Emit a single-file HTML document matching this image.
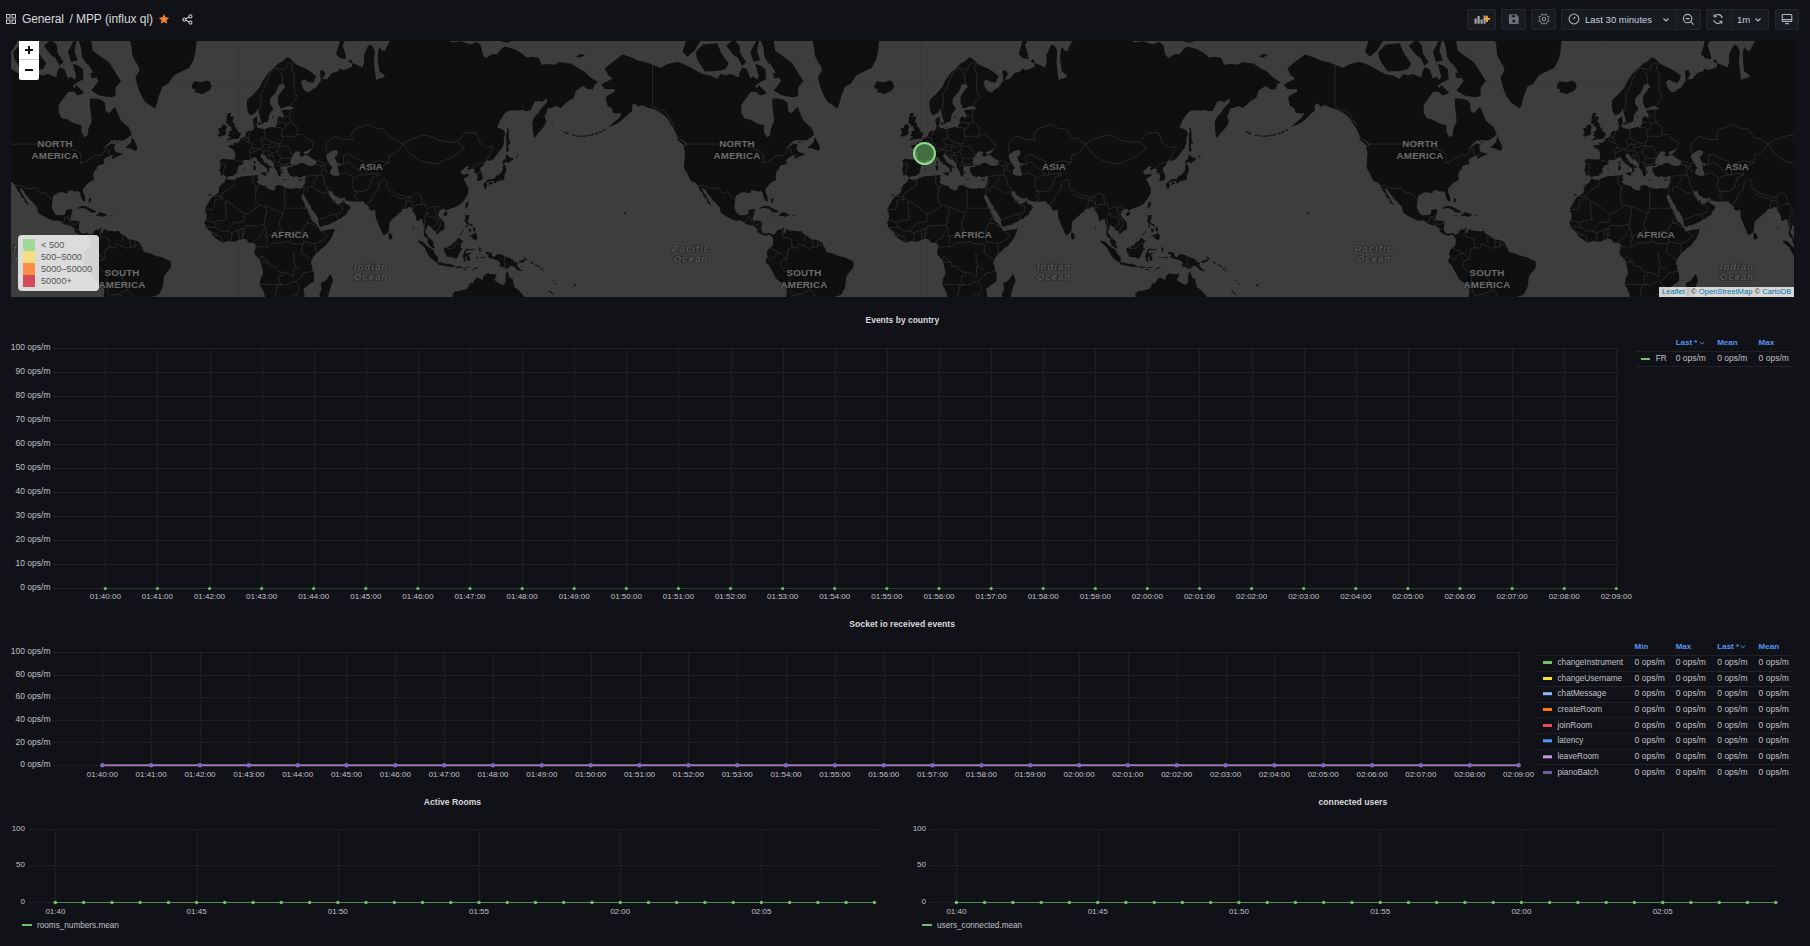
<!DOCTYPE html>
<html><head><meta charset="utf-8"><title>MPP (influx ql)</title>
<style>
html,body{margin:0;padding:0;background:#111217;width:1810px;height:946px;overflow:hidden;font-family:"Liberation Sans",sans-serif;}
.abs{position:absolute;}
.t{position:absolute;white-space:nowrap;}
.btn{position:absolute;top:9px;height:21px;box-sizing:border-box;background:#181b1f;border:1px solid #25282d;border-radius:2px;}
.btn svg{position:absolute;}
#map{position:absolute;left:11px;top:41px;width:1783px;height:256px;background:#3d3d3d;overflow:hidden;}
.mapsvg{position:absolute;left:0;top:0;}
.lbl{position:absolute;color:#6a6a6a;font-weight:bold;font-size:9.8px;text-align:center;line-height:11.5px;letter-spacing:0.15px;white-space:nowrap;transform:translateX(-50%);text-shadow:0 0 1px #151515,0 0 2px #151515;}
.ocean{position:absolute;color:#575757;font-style:italic;font-weight:bold;font-size:9.6px;text-align:center;line-height:10.6px;letter-spacing:1.05px;white-space:nowrap;transform:translateX(-50%);text-shadow:0 0 1px #1f1f1f,0 0 1px #1f1f1f,0 0 2px #262626;}
</style></head><body>

<!-- header -->
<svg class="abs" style="left:5px;top:13px" width="12" height="12" viewBox="0 0 12 12">
 <rect x="1.5" y="1.5" width="3.5" height="3.5" fill="none" stroke="#c9c9cf" stroke-width="1"/>
 <rect x="7" y="1.5" width="3.5" height="3.5" fill="none" stroke="#c9c9cf" stroke-width="1"/>
 <rect x="1.5" y="7" width="3.5" height="3.5" fill="none" stroke="#c9c9cf" stroke-width="1"/>
 <rect x="7" y="7" width="3.5" height="3.5" fill="none" stroke="#c9c9cf" stroke-width="1"/>
</svg>
<div class="t" style="left:22px;top:12px;font-size:12px;line-height:15px;color:#d8d9da;letter-spacing:-0.12px">General</div><div class="t" style="left:69.4px;top:12px;font-size:12px;line-height:15px;color:#d8d9da;letter-spacing:-0.05px">/ MPP (influx ql)</div>
<svg class="abs" style="left:158px;top:13px" width="12" height="12" viewBox="0 0 24 24"><path d="M12 1.8l3.1 6.6 7.2.9-5.3 5 1.4 7.1L12 17.9l-6.4 3.5 1.4-7.1-5.3-5 7.2-.9z" fill="#f5822a"/></svg>
<svg class="abs" style="left:181.5px;top:13.5px" width="11" height="11" viewBox="0 0 12 12" fill="none" stroke="#d0d0d6" stroke-width="1.15">
 <circle cx="9.2" cy="2.6" r="1.7"/><circle cx="2.7" cy="6" r="1.7"/><circle cx="9.2" cy="9.4" r="1.7"/>
 <path d="M4.2 5.2L7.7 3.4M4.2 6.8L7.7 8.6"/>
</svg>

<!-- toolbar -->
<div class="btn" style="left:1467px;width:29px;">
 <svg style="left:5px;top:3px" width="19" height="13" viewBox="0 0 19 13">
  <rect x="1.5" y="5.5" width="2.2" height="5.2" fill="#a3a5ad"/><rect x="4.5" y="3" width="2.2" height="7.7" fill="#a3a5ad"/>
  <rect x="7.5" y="6.5" width="2.2" height="4.2" fill="#a3a5ad"/><rect x="10.5" y="2.5" width="2.2" height="8.2" fill="#a3a5ad"/>
  <path d="M14 2.8v6.2M10.9 5.9h6.2" stroke="#f5a623" stroke-width="1.9"/>
 </svg>
</div>
<div class="btn" style="left:1501px;width:25px;">
 <svg style="left:6px;top:3px" width="12" height="12" viewBox="0 0 12 12">
  <path d="M1.8 1.2h6.3l2.7 2.7v6.1q0 .9-.9.9H1.8q-.9 0-.9-.9V2.1q0-.9.9-.9z" fill="#6f7178"/>
  <rect x="3.6" y="2.2" width="3.6" height="2" fill="#1b1d21"/><circle cx="5.9" cy="8" r="1.5" fill="#1b1d21"/>
 </svg>
</div>
<div class="btn" style="left:1531px;width:25px;">
 <svg style="left:6px;top:3px" width="12" height="12" viewBox="0 0 24 24" fill="none" stroke="#a9abb3" stroke-width="1.8">
  <circle cx="12" cy="12" r="3.4"/>
  <path d="M21.89 16.09 L21.72 16.48 L21.53 16.86 L21.25 17.18 L20.39 17.14 L19.48 17.00 L18.60 16.80 L18.27 16.94 L18.07 17.18 L17.86 17.42 L17.64 17.64 L17.42 17.86 L17.18 18.07 L16.94 18.27 L16.80 18.60 L17.00 19.48 L17.14 20.39 L17.18 21.25 L16.86 21.53 L16.48 21.72 L16.09 21.89 L15.70 22.04 L15.31 22.18 L14.88 22.20 L14.30 21.57 L13.76 20.83 L13.28 20.06 L12.94 19.92 L12.63 19.96 L12.31 19.97 L12.00 19.98 L11.69 19.97 L11.37 19.96 L11.06 19.92 L10.72 20.06 L10.24 20.83 L9.70 21.57 L9.12 22.20 L8.69 22.18 L8.30 22.04 L7.91 21.89 L7.52 21.72 L7.14 21.53 L6.82 21.25 L6.86 20.39 L7.00 19.48 L7.20 18.60 L7.06 18.27 L6.82 18.07 L6.58 17.86 L6.36 17.64 L6.14 17.42 L5.93 17.18 L5.73 16.94 L5.40 16.80 L4.52 17.00 L3.61 17.14 L2.75 17.18 L2.47 16.86 L2.28 16.48 L2.11 16.09 L1.96 15.70 L1.82 15.31 L1.80 14.88 L2.43 14.30 L3.17 13.76 L3.94 13.28 L4.08 12.94 L4.04 12.63 L4.03 12.31 L4.02 12.00 L4.03 11.69 L4.04 11.37 L4.08 11.06 L3.94 10.72 L3.17 10.24 L2.43 9.70 L1.80 9.12 L1.82 8.69 L1.96 8.30 L2.11 7.91 L2.28 7.52 L2.47 7.14 L2.75 6.82 L3.61 6.86 L4.52 7.00 L5.40 7.20 L5.73 7.06 L5.93 6.82 L6.14 6.58 L6.36 6.36 L6.58 6.14 L6.82 5.93 L7.06 5.73 L7.20 5.40 L7.00 4.52 L6.86 3.61 L6.82 2.75 L7.14 2.47 L7.52 2.28 L7.91 2.11 L8.30 1.96 L8.69 1.82 L9.12 1.80 L9.70 2.43 L10.24 3.17 L10.72 3.94 L11.06 4.08 L11.37 4.04 L11.69 4.03 L12.00 4.02 L12.31 4.03 L12.63 4.04 L12.94 4.08 L13.28 3.94 L13.76 3.17 L14.30 2.43 L14.88 1.80 L15.31 1.82 L15.70 1.96 L16.09 2.11 L16.48 2.28 L16.86 2.47 L17.18 2.75 L17.14 3.61 L17.00 4.52 L16.80 5.40 L16.94 5.73 L17.18 5.93 L17.42 6.14 L17.64 6.36 L17.86 6.58 L18.07 6.82 L18.27 7.06 L18.60 7.20 L19.48 7.00 L20.39 6.86 L21.25 6.82 L21.53 7.14 L21.72 7.52 L21.89 7.91 L22.04 8.30 L22.18 8.69 L22.20 9.12 L21.57 9.70 L20.83 10.24 L20.06 10.72 L19.92 11.06 L19.96 11.37 L19.97 11.69 L19.98 12.00 L19.97 12.31 L19.96 12.63 L19.92 12.94 L20.06 13.28 L20.83 13.76 L21.57 14.30 L22.20 14.88 L22.18 15.31 L22.04 15.70Z" stroke-linejoin="round"/>
 </svg>
</div>
<div class="btn" style="left:1561px;width:140px;">
 <svg style="left:6px;top:3px" width="12" height="12" viewBox="0 0 12 12" fill="none" stroke="#b3b5bc" stroke-width="1.05">
  <circle cx="6" cy="6" r="4.9"/><path d="M5.6 6.1L7.1 3.9"/>
 </svg>
 <div class="t" style="left:23px;top:2.5px;font-size:9.5px;line-height:13px;color:#c2cde0;">Last 30 minutes</div>
 <svg style="left:100.2px;top:6.5px" width="8" height="6" viewBox="0 0 8 6"><path d="M1.5 1.5L4 4 6.5 1.5" fill="none" stroke="#b9bac2" stroke-width="1.1"/></svg>
 <div class="abs" style="left:114px;top:0;width:1px;height:19px;background:#25282d;"></div>
 <svg style="left:120px;top:3px" width="13" height="13" viewBox="0 0 13 13" fill="none" stroke="#b3b5bc" stroke-width="1.1">
  <circle cx="5.6" cy="5.6" r="4.2"/><path d="M3.6 5.6h4M8.6 8.6L11.6 11.6"/>
 </svg>
</div>
<div class="btn" style="left:1706px;width:63px;">
 <svg style="left:5px;top:3px" width="12" height="12" viewBox="0 0 12 12" fill="none" stroke="#b3b5bc" stroke-width="1.1">
  <path d="M10.2 5A4.3 4.3 0 0 0 2.4 3.5M1.8 7a4.3 4.3 0 0 0 7.8 1.5"/><path d="M2.2 1.2v2.5h2.5M9.8 10.8V8.3H7.3"/>
 </svg>
 <div class="abs" style="left:24px;top:0;width:1px;height:19px;background:#25282d;"></div>
 <div class="t" style="left:30px;top:2.5px;font-size:9.5px;line-height:13px;color:#c2cde0;">1m</div>
 <svg style="left:46.5px;top:6.5px" width="8" height="6" viewBox="0 0 8 6"><path d="M1.5 1.5L4 4 6.5 1.5" fill="none" stroke="#b9bac2" stroke-width="1.1"/></svg>
</div>
<div class="btn" style="left:1775px;width:24px;">
 <svg style="left:4.8px;top:3px" width="12" height="12" viewBox="0 0 12 12" fill="none" stroke="#b3b5bc" stroke-width="1.1">
  <rect x="1.2" y="1.5" width="9.6" height="7" rx="0.8"/><path d="M1.2 6.6h9.6M4.2 10.6h3.6"/>
 </svg>
</div>

<!-- map -->
<div id="map">
<svg class="mapsvg" width="1783" height="256" viewBox="0 0 1783 256"><defs><path id="grat" d="M341.90 -300V300M0 -169.50H682.5" stroke="#393939" stroke-width="1" fill="none"/><g id="wld"><path d="M22.6 -166.4L31.3 -171.0L34.1 -172.5L29.4 -175.9L26.2 -182.6L32.2 -187.4L37.9 -191.9L44.0 -196.5L53.1 -193.6L60.1 -190.2L68.2 -188.5L73.9 -186.3L82.5 -183.1L87.2 -186.3L94.8 -188.5L99.7 -189.1L107.9 -185.8L113.8 -182.6L123.6 -176.9L131.9 -175.4L138.6 -172.0L142.0 -176.9L146.9 -175.4L151.9 -176.9L160.2 -173.4L161.0 -178.4L163.4 -183.6L168.3 -182.0L171.8 -172.5L175.0 -174.4L178.4 -171.0L180.1 -174.4L176.7 -186.9L181.6 -185.8L186.7 -182.0L187.5 -172.0L181.6 -168.7L176.7 -165.4L179.2 -160.1L171.8 -158.8L168.7 -154.6L162.7 -146.1L162.5 -138.6L165.9 -132.5L171.6 -131.5L178.2 -127.4L185.2 -125.7L185.4 -118.6L188.6 -113.7L191.5 -115.8L192.2 -122.1L195.5 -129.7L194.7 -137.9L193.8 -145.0L193.8 -152.5L200.0 -152.5L205.7 -150.9L208.9 -148.1L209.5 -140.4L212.7 -137.5L216.1 -141.2L219.0 -144.2L222.8 -135.0L224.7 -130.4L229.0 -126.4L232.6 -123.7L235.7 -116.7L232.8 -114.0L227.5 -110.4L219.9 -110.7L215.2 -110.4L210.4 -105.7L206.6 -101.2L209.5 -103.4L215.2 -107.4L219.2 -106.3L218.0 -103.4L218.6 -100.9L219.9 -99.0L225.6 -97.4L227.5 -98.7L225.2 -96.3L219.9 -93.9L216.5 -92.0L215.7 -94.7L219.3 -96.8L214.2 -95.5L211.4 -93.9L208.2 -92.3L207.4 -89.7L208.7 -87.4L205.7 -86.4L201.5 -84.9L201.0 -83.9L200.4 -81.4L198.3 -80.2L197.0 -76.1L197.9 -71.6L196.2 -70.2L192.4 -68.2L189.6 -65.2L186.9 -61.9L187.1 -58.6L189.2 -53.2L189.0 -50.0L187.9 -49.2L186.2 -51.3L184.5 -54.9L184.3 -57.9L182.0 -59.9L179.2 -59.2L176.3 -60.5L172.7 -60.5L171.4 -58.1L169.7 -57.7L166.8 -58.8L163.0 -58.8L160.2 -57.1L157.0 -54.9L156.6 -51.1L156.0 -47.5L155.8 -43.6L156.8 -40.7L158.7 -37.3L161.5 -35.5L165.9 -35.9L168.3 -36.1L169.9 -38.5L169.9 -40.7L173.5 -41.8L176.3 -41.8L175.6 -37.7L174.8 -35.1L173.8 -30.7L177.3 -30.3L182.0 -30.3L183.5 -28.8L182.9 -24.9L182.8 -21.0L183.9 -19.1L186.7 -17.1L190.5 -18.3L193.8 -16.7L194.7 -15.6L193.6 -13.7L192.6 -15.4L190.3 -16.7L188.8 -15.2L186.6 -15.2L182.6 -16.4L178.8 -18.9L178.6 -21.4L175.4 -24.7L171.6 -25.8L167.8 -26.8L164.0 -29.8L161.1 -30.7L158.3 -30.1L154.5 -31.3L151.7 -32.5L147.9 -34.5L144.1 -36.7L141.6 -39.3L141.4 -41.8L140.9 -44.0L138.8 -46.1L136.5 -49.0L134.0 -51.1L131.8 -54.3L129.1 -57.1L127.2 -60.8L123.8 -63.2L124.2 -60.3L126.6 -56.6L128.5 -53.2L130.8 -49.0L132.1 -47.3L132.9 -44.8L131.9 -46.3L128.7 -48.6L128.3 -52.1L124.6 -54.5L124.7 -57.1L121.7 -60.3L120.0 -63.4L119.1 -65.7L116.8 -68.4L112.6 -69.8L110.1 -73.9L109.0 -77.5L106.7 -80.4L105.4 -83.9L105.8 -87.9L106.0 -93.1L106.4 -99.0L104.8 -104.6L107.7 -104.9L108.4 -106.9L106.2 -109.2L103.3 -111.3L99.5 -112.8L97.6 -117.4L94.8 -123.1L91.9 -127.0L89.1 -132.2L84.4 -136.8L81.5 -138.2L76.2 -141.5L70.1 -143.1L63.5 -146.1L59.7 -144.2L56.5 -147.7L53.5 -145.7L53.5 -140.1L50.2 -137.5L47.4 -134.6L42.7 -130.4L38.9 -127.4L34.1 -125.4L29.4 -123.7L35.1 -128.4L40.8 -133.2L43.0 -137.9L39.8 -137.5L34.5 -137.9L33.2 -142.7L29.0 -145.0L27.9 -149.7L26.9 -153.3L29.4 -155.8L36.0 -159.2L36.0 -161.9L31.3 -161.9L26.2 -161.9L22.6 -166.4ZM258.8 -142.3L254.0 -145.7L249.3 -148.9L245.5 -155.0L243.0 -160.5L240.8 -167.3L239.4 -173.9L243.6 -181.0L241.7 -185.8L238.9 -190.2L236.0 -195.9L235.5 -203.3L233.2 -213.1L230.3 -224.0L223.7 -229.4L212.3 -231.0L204.8 -240.2L208.5 -254.2L218.0 -273.7L237.0 -291.7L265.4 -311.6L293.9 -303.5L307.1 -282.4L306.2 -254.2L304.3 -235.9L303.3 -220.2L300.5 -209.8L299.5 -200.2L297.6 -191.3L292.9 -183.1L284.4 -178.9L277.7 -175.4L272.1 -167.3L266.4 -164.5L264.5 -159.2L262.6 -155.0L260.7 -146.9ZM295.8 -165.9L298.6 -170.1L303.3 -168.7L307.1 -169.1L310.9 -170.6L313.8 -169.1L315.7 -164.5L313.2 -160.5L309.0 -158.4L305.8 -156.7L301.4 -158.4L298.2 -158.4L299.5 -161.4L295.8 -162.7ZM182.0 -212.5L194.9 -211.8L196.6 -200.2L213.1 -188.5L224.8 -170.1L219.7 -163.6L219.3 -155.0L215.2 -153.7L208.5 -154.6L202.9 -155.8L195.3 -160.5L202.5 -170.1L192.4 -186.3L189.6 -188.0L185.8 -194.2L184.8 -203.3ZM176.7 -160.1L180.1 -165.9L188.3 -157.9L181.6 -155.4ZM117.2 -198.9L124.6 -206.5L138.6 -207.8L142.8 -197.7L150.2 -187.4L146.9 -182.0L138.6 -180.0L126.3 -179.4L120.4 -188.5L117.9 -193.6ZM103.9 -198.9L107.9 -211.8L122.8 -211.8L116.2 -200.8L108.8 -194.2ZM147.7 -205.2L155.3 -211.8L161.0 -205.2L161.7 -197.7L167.6 -189.1L163.4 -185.2L159.2 -193.6L155.3 -195.4ZM171.8 -198.9L178.4 -211.8L180.9 -211.8L178.4 -200.2L181.6 -190.7L175.0 -189.1ZM194.1 -177.9L199.1 -178.4L200.0 -173.4L195.8 -172.5ZM194.5 -16.2L196.2 -16.9L197.5 -18.3L198.5 -20.6L200.6 -21.6L202.9 -21.6L204.9 -23.3L206.3 -22.9L204.9 -21.6L205.7 -19.6L206.5 -17.7L206.8 -20.6L208.5 -22.1L211.4 -20.2L215.2 -20.2L219.0 -19.4L222.8 -20.2L223.9 -18.1L226.0 -16.4L228.4 -15.8L230.9 -13.1L233.2 -11.4L237.0 -11.2L239.8 -10.6L242.7 -9.1L244.0 -8.0L244.9 -4.4L246.5 -3.2L246.8 -0.4L249.3 1.5L253.1 1.9L256.5 3.6L258.8 4.6L262.6 5.5L266.4 6.3L270.2 8.5L274.3 10.1L275.1 14.3L274.5 17.1L272.1 19.8L270.2 22.3L268.1 24.9L267.3 28.4L267.1 33.7L266.0 37.3L264.5 40.3L262.8 43.4L259.7 44.8L256.5 45.6L253.1 47.1L250.2 49.6L249.1 53.2L248.5 56.6L245.9 60.3L243.0 64.1L240.8 68.2L237.9 70.5L234.1 70.5L231.3 69.3L232.8 73.0L232.2 78.0L228.4 79.7L223.3 80.2L223.3 84.1L218.0 85.4L220.3 88.7L217.5 93.9L213.3 99.3L216.5 103.4L212.3 110.7L210.4 114.6L211.8 118.9L215.2 125.4L209.5 126.7L204.8 123.1L200.0 117.4L198.1 108.3L198.1 99.8L200.4 93.1L201.3 86.6L201.9 79.2L203.8 72.1L205.5 65.2L205.9 59.7L206.8 54.3L207.6 46.9L208.2 40.7L208.0 35.3L205.7 33.3L201.9 31.1L197.5 27.8L195.7 23.9L193.0 19.1L190.5 14.5L187.3 11.6L187.3 8.2L189.0 6.4L189.6 4.7L188.1 4.2L188.1 1.9L189.4 -1.5L191.5 -3.0L193.8 -4.9L194.5 -7.4L194.7 -11.0L194.3 -13.1L193.6 -13.9ZM180.3 -42.6L183.9 -44.6L186.7 -45.2L190.5 -44.4L194.3 -42.4L197.7 -40.9L200.6 -39.3L198.1 -38.5L194.3 -38.5L193.0 -39.9L190.5 -42.0L186.7 -43.0L182.9 -42.6ZM200.2 -35.5L202.9 -38.5L205.7 -38.5L209.5 -37.1L211.6 -35.9L208.5 -35.1L205.9 -33.9L203.8 -35.3L200.4 -34.7ZM192.6 -35.5L196.8 -35.3L196.2 -34.5L193.4 -34.9ZM213.9 -35.7L216.9 -35.3L216.5 -34.7L213.9 -34.7ZM193.0 -52.8L195.3 -52.3L194.3 -49.0L192.4 -47.9ZM330.1 -72.8L332.7 -71.4L337.1 -71.1L341.2 -73.0L346.0 -74.7L351.7 -75.1L357.6 -75.4L360.6 -76.1L362.3 -75.4L361.3 -72.5L362.3 -71.4L360.6 -69.3L361.9 -67.7L364.9 -65.9L370.3 -64.8L371.0 -62.8L376.3 -60.5L378.4 -60.8L379.4 -63.0L379.2 -64.8L382.0 -66.1L385.2 -65.4L389.0 -63.2L393.4 -62.3L397.9 -62.3L400.0 -63.2L402.5 -62.5L403.1 -59.4L404.2 -56.2L405.5 -53.6L406.8 -50.2L408.7 -46.7L409.1 -43.8L411.4 -41.8L412.0 -37.9L414.2 -34.7L415.6 -30.7L417.1 -29.2L419.4 -27.6L421.4 -24.9L423.1 -22.3L425.6 -19.8L428.5 -20.4L432.2 -21.4L435.7 -21.6L438.5 -22.5L438.1 -19.8L437.2 -17.1L435.1 -12.5L432.2 -8.7L429.4 -5.1L425.8 -2.7L422.4 0.4L419.9 3.0L417.5 5.3L415.6 8.9L414.8 12.3L415.9 15.2L416.3 19.1L417.8 21.9L418.2 27.2L417.5 30.7L412.3 33.9L409.5 36.3L407.2 38.3L408.4 42.8L408.6 46.5L403.8 49.8L403.4 52.1L403.2 55.3L401.9 57.3L399.6 60.8L396.2 64.8L392.8 67.5L389.6 68.6L383.9 68.6L379.2 70.5L376.1 69.3L375.8 64.1L373.9 58.6L372.3 56.4L370.1 52.8L368.7 44.8L368.0 41.8L365.5 36.7L363.6 33.7L364.4 27.8L367.0 22.9L366.3 18.1L364.6 11.8L364.0 9.1L361.7 6.6L358.7 3.4L358.3 0.9L359.3 -1.9L359.8 -5.7L357.9 -8.2L355.5 -8.3L352.6 -8.2L349.8 -12.0L346.0 -12.0L343.1 -11.2L339.4 -9.5L335.6 -9.5L331.8 -9.9L327.0 -8.3L323.2 -10.4L319.4 -13.1L316.6 -15.2L315.8 -18.1L312.8 -20.8L309.6 -23.7L309.2 -26.4L308.1 -28.2L309.4 -29.9L310.3 -32.7L310.7 -35.7L310.0 -37.7L308.8 -40.5L309.2 -42.6L310.9 -46.3L313.0 -49.2L314.1 -51.5L316.4 -54.7L319.4 -56.0L321.9 -58.1L322.9 -60.8L322.7 -63.0L324.2 -65.4L326.7 -67.7L328.4 -68.8L329.5 -71.4ZM434.7 22.9L436.4 27.8L437.0 29.8L435.7 32.7L434.7 35.7L433.2 40.7L431.9 45.9L430.5 48.8L427.5 50.0L425.0 48.6L423.9 45.4L423.3 42.4L425.4 38.7L424.9 34.7L424.7 31.9L427.5 30.7L430.4 28.8L432.1 26.0ZM330.6 -73.2L329.1 -75.1L327.0 -76.1L324.4 -75.6L324.6 -78.7L323.2 -79.9L324.2 -83.4L324.6 -86.6L323.6 -90.5L326.1 -92.3L330.8 -91.8L334.0 -91.5L338.2 -91.5L339.0 -94.9L339.0 -98.4L337.1 -101.5L332.7 -103.7L332.3 -105.4L335.6 -106.3L338.2 -105.7L337.6 -108.9L339.0 -108.0L341.6 -108.3L344.1 -110.4L344.3 -112.5L347.3 -113.7L349.2 -115.5L350.2 -118.6L352.6 -120.2L354.9 -119.9L357.6 -121.8L357.6 -126.7L356.6 -130.8L357.6 -132.5L361.3 -134.6L361.0 -130.4L361.9 -130.1L360.2 -125.7L361.7 -123.1L364.0 -122.8L367.8 -121.8L371.6 -123.1L376.5 -124.1L378.8 -123.4L381.3 -127.7L381.1 -131.5L382.4 -134.3L384.1 -135.0L387.1 -132.5L387.5 -137.1L385.8 -138.9L385.8 -140.4L388.1 -141.2L391.5 -141.2L394.3 -141.2L398.5 -142.7L396.2 -143.8L393.4 -145.0L390.5 -144.6L388.6 -143.8L384.7 -142.3L383.3 -145.0L381.8 -148.9L382.0 -155.0L384.9 -158.8L387.7 -162.7L389.4 -164.1L387.1 -167.3L383.0 -166.4L381.4 -161.9L379.2 -157.9L376.3 -155.0L374.2 -152.5L373.9 -146.9L376.5 -143.8L377.1 -141.2L375.0 -139.3L372.9 -135.7L372.5 -132.2L371.4 -129.1L368.6 -128.7L365.7 -126.7L365.1 -129.7L363.8 -134.3L362.3 -139.3L361.5 -142.7L360.2 -139.3L357.4 -136.8L354.5 -135.7L351.9 -138.6L351.3 -141.5L350.7 -145.3L350.9 -150.5L353.0 -152.9L357.4 -156.7L363.1 -163.2L366.5 -170.1L370.8 -176.4L373.5 -179.4L377.8 -183.1L382.0 -187.4L386.4 -189.6L390.2 -193.6L393.0 -193.0L396.2 -190.2L399.6 -186.9L403.8 -184.7L408.2 -183.1L414.2 -179.4L419.9 -174.9L418.0 -170.1L416.5 -168.2L412.3 -169.1L408.2 -171.5L404.8 -169.6L406.5 -163.6L408.6 -160.5L410.4 -159.2L413.3 -158.8L416.1 -161.4L419.9 -163.6L423.7 -169.1L424.7 -169.6L424.3 -175.4L423.7 -180.5L427.5 -180.5L429.4 -176.9L426.0 -171.5L431.3 -172.0L436.0 -177.9L441.7 -179.4L443.6 -182.6L447.4 -181.0L452.2 -182.6L455.9 -184.2L456.1 -188.0L461.6 -185.8L466.4 -183.6L468.1 -188.5L467.7 -195.4L471.1 -203.3L473.0 -206.5L475.9 -205.2L478.7 -200.2L479.3 -194.2L478.9 -188.5L478.7 -180.5L481.5 -176.9L482.9 -182.0L481.0 -185.8L481.5 -192.5L480.0 -197.1L483.4 -203.9L486.3 -200.2L489.1 -200.2L490.1 -203.3L493.9 -209.8L496.7 -210.4L505.2 -213.1L506.2 -220.2L511.9 -224.0L521.4 -227.8L530.8 -231.8L538.4 -242.0L544.1 -235.9L553.6 -231.8L556.4 -224.7L554.5 -213.1L550.7 -211.1L556.4 -208.4L565.0 -209.8L574.4 -206.5L581.1 -209.1L584.9 -205.2L586.4 -197.1L589.6 -193.0L595.3 -196.5L601.0 -197.1L605.7 -202.6L608.6 -204.5L618.0 -202.0L625.6 -197.7L630.4 -193.6L637.0 -194.2L642.7 -193.0L645.5 -186.3L652.2 -186.9L658.8 -186.3L663.5 -189.1L669.2 -188.0L674.9 -187.4L682.5 -182.6L688.2 -179.4L693.9 -173.9L698.6 -171.0L702.0 -168.7L698.6 -166.4L696.7 -161.4L691.0 -161.9L687.2 -165.0L684.4 -163.6L681.6 -161.4L679.7 -160.1L677.8 -153.3L672.1 -150.1L669.2 -147.3L664.5 -143.1L659.8 -145.0L655.0 -143.1L651.2 -142.3L650.3 -137.5L648.4 -135.0L650.3 -129.4L648.4 -125.4L644.6 -120.5L641.7 -117.4L638.3 -112.8L637.0 -117.4L636.4 -123.7L636.1 -128.7L637.9 -133.2L639.8 -135.7L642.7 -138.6L645.5 -143.1L647.4 -145.0L651.2 -148.9L650.8 -152.5L645.5 -148.9L643.6 -150.1L638.9 -149.7L634.2 -140.4L629.4 -139.7L627.5 -141.2L622.8 -140.4L617.1 -140.8L612.4 -140.4L608.6 -137.5L603.8 -130.4L601.0 -123.7L604.8 -122.1L607.6 -120.5L609.3 -117.4L607.8 -112.8L607.6 -106.9L605.7 -102.6L603.8 -100.6L600.6 -96.3L597.6 -92.3L593.4 -89.9L591.1 -90.7L588.8 -88.9L587.1 -85.4L583.9 -82.9L584.9 -79.2L586.4 -76.3L586.6 -72.8L586.0 -71.1L583.0 -70.2L580.9 -69.5L580.9 -72.1L581.5 -75.1L580.5 -77.3L578.6 -77.5L577.9 -79.4L578.6 -81.6L576.7 -82.6L574.2 -81.9L571.8 -80.2L571.6 -82.4L573.1 -84.1L571.0 -85.1L568.8 -83.4L566.5 -80.9L564.6 -80.2L565.0 -78.0L566.9 -76.1L569.7 -77.0L573.5 -76.6L572.5 -75.1L569.3 -73.5L567.2 -70.9L569.3 -69.3L570.6 -65.2L572.4 -63.4L572.4 -61.6L571.6 -60.1L572.5 -59.2L571.6 -56.4L569.7 -53.6L568.0 -51.1L565.9 -47.9L563.1 -45.9L560.2 -44.4L557.8 -43.4L555.5 -42.8L552.6 -41.8L550.7 -41.1L550.2 -39.3L549.2 -41.8L546.9 -42.2L543.5 -40.3L541.8 -36.7L543.2 -34.3L545.1 -31.7L547.5 -29.6L548.5 -25.8L548.3 -22.1L546.0 -20.6L543.7 -19.6L542.8 -18.1L540.5 -16.4L539.9 -18.3L540.5 -19.1L539.0 -20.0L536.5 -21.0L535.8 -23.3L534.1 -24.3L532.5 -25.8L531.0 -25.6L530.8 -23.3L529.3 -19.8L529.3 -17.5L531.4 -16.0L531.8 -13.9L533.7 -12.9L535.0 -11.8L537.3 -9.3L537.3 -6.4L538.0 -4.7L539.0 -2.7L537.5 -2.5L535.6 -3.8L533.3 -5.3L532.0 -8.0L531.2 -10.4L531.4 -12.3L530.3 -13.1L528.0 -15.2L527.6 -18.1L528.0 -20.4L528.4 -22.9L527.4 -25.8L526.7 -28.8L526.3 -31.7L524.2 -31.7L522.1 -30.1L520.0 -30.7L519.8 -34.7L518.5 -37.5L516.6 -39.7L515.7 -41.8L515.3 -43.6L513.0 -44.0L510.9 -42.4L509.0 -42.2L506.2 -41.8L505.2 -39.1L502.6 -37.7L500.5 -35.3L497.3 -32.7L495.4 -31.3L493.5 -28.8L493.1 -25.8L493.3 -22.9L492.5 -19.6L491.0 -17.7L489.5 -16.9L488.2 -15.4L486.5 -16.9L485.3 -20.0L484.4 -22.5L483.1 -24.5L481.7 -28.4L480.6 -30.7L479.6 -34.3L479.3 -37.1L479.3 -39.7L478.9 -41.5L477.7 -40.7L476.2 -40.3L474.0 -41.1L472.1 -43.2L474.5 -44.4L472.1 -44.4L470.5 -46.3L469.0 -46.9L467.9 -48.6L467.3 -49.8L463.5 -49.4L458.8 -49.2L457.8 -49.2L454.1 -49.8L449.9 -50.7L449.1 -53.0L448.2 -53.6L445.5 -52.6L442.7 -53.0L439.8 -54.9L438.5 -55.3L437.0 -57.5L436.0 -59.9L433.4 -59.7L432.1 -59.4L433.0 -56.4L433.8 -54.5L435.3 -53.0L436.4 -51.1L437.6 -48.6L438.3 -51.3L439.1 -50.7L439.1 -47.9L440.8 -47.3L443.6 -47.1L446.5 -49.6L447.6 -51.3L448.2 -51.9L448.2 -48.8L450.1 -46.7L452.3 -46.1L453.7 -44.4L454.6 -43.6L452.7 -40.7L450.8 -39.1L450.6 -36.7L448.6 -35.3L445.9 -33.9L445.1 -32.5L441.0 -31.3L440.2 -29.9L435.3 -28.0L433.6 -26.8L431.3 -26.0L427.7 -25.4L426.6 -24.5L423.7 -24.3L423.1 -25.4L422.4 -28.8L422.2 -31.5L421.4 -33.7L419.4 -36.7L418.6 -38.7L416.5 -40.5L415.4 -41.8L414.2 -46.1L412.3 -47.5L411.6 -49.2L409.9 -52.3L408.7 -54.9L407.4 -56.4L407.6 -58.6L406.8 -57.7L406.3 -55.3L404.9 -55.1L403.2 -58.8L403.1 -60.3L402.5 -62.5L406.1 -62.5L406.8 -63.6L407.6 -65.9L408.6 -68.4L409.3 -71.4L409.3 -73.0L409.9 -74.7L408.6 -74.7L407.0 -75.1L405.7 -73.9L402.9 -73.5L400.0 -75.1L397.6 -73.7L395.3 -75.1L393.4 -75.6L392.8 -77.7L391.3 -78.7L392.1 -80.4L390.9 -81.6L391.5 -83.1L393.0 -83.9L395.9 -83.9L397.2 -84.9L396.4 -85.9L394.3 -85.6L391.3 -84.4L389.6 -85.1L387.7 -85.1L386.2 -84.6L384.7 -84.4L384.1 -82.9L385.4 -80.9L384.1 -79.2L386.8 -78.5L385.2 -77.7L384.5 -76.3L384.9 -74.4L383.7 -74.4L382.4 -75.1L381.6 -77.0L381.3 -78.7L380.5 -80.4L379.2 -82.1L378.0 -83.6L378.0 -86.6L376.3 -89.2L373.9 -91.2L371.6 -91.8L370.1 -93.6L368.4 -96.3L367.2 -96.0L367.0 -97.9L364.6 -96.5L364.6 -94.7L365.1 -93.3L367.0 -91.8L367.8 -89.2L369.9 -87.6L371.8 -87.4L371.4 -86.6L374.4 -85.1L376.3 -83.4L376.1 -82.4L373.9 -83.9L372.7 -82.9L373.7 -80.4L372.0 -78.7L371.0 -78.0L371.2 -80.2L370.8 -83.1L369.5 -83.4L368.4 -84.6L367.0 -85.9L365.1 -86.6L363.1 -88.9L361.2 -90.2L360.6 -92.8L358.3 -94.1L356.4 -92.8L354.5 -91.8L352.6 -90.7L350.0 -91.5L347.1 -90.7L347.3 -87.9L345.4 -86.1L342.8 -85.4L341.6 -82.6L340.7 -81.1L341.6 -79.7L339.9 -77.0L338.6 -76.8L337.3 -74.9L333.7 -74.9L332.0 -74.4ZM330.4 -110.1L333.1 -111.0L334.8 -111.6L337.5 -111.9L339.4 -112.2L341.8 -112.2L343.9 -113.4L343.0 -114.6L344.5 -116.1L344.5 -118.0L342.0 -118.9L341.4 -120.5L340.5 -122.8L339.0 -124.1L338.2 -127.4L337.3 -128.7L335.6 -129.1L336.5 -130.1L337.5 -132.5L337.8 -134.3L335.0 -134.6L333.7 -134.3L335.4 -137.9L331.8 -137.9L331.0 -135.3L330.4 -132.9L330.6 -130.1L329.7 -129.1L330.8 -126.7L332.0 -127.7L332.5 -126.0L331.6 -124.7L334.6 -125.0L334.8 -123.1L335.6 -121.8L335.6 -120.2L333.3 -119.9L332.5 -118.6L333.5 -117.0L331.4 -115.2L333.3 -114.6L335.4 -114.0L334.6 -113.4L332.7 -113.1L331.4 -111.3ZM329.9 -116.4L329.7 -119.9L329.9 -122.1L330.8 -123.7L329.5 -126.0L327.4 -126.4L325.1 -125.0L325.1 -123.1L322.3 -122.8L322.7 -120.2L323.6 -117.7L321.5 -115.5L323.2 -114.3L326.1 -115.2L328.9 -116.1ZM364.8 -78.2L366.8 -78.5L370.8 -78.7L369.9 -76.3L369.9 -74.9L367.8 -75.8L365.1 -77.0ZM356.8 -85.1L358.7 -85.9L359.8 -84.1L359.4 -80.9L358.3 -80.4L357.2 -80.7L357.4 -83.6ZM357.6 -88.9L359.1 -90.5L359.4 -88.1L358.7 -86.4L357.7 -87.4ZM385.8 -71.6L388.6 -71.8L391.1 -71.4L388.6 -70.9L386.0 -71.4ZM402.5 -70.9L403.8 -71.6L406.8 -72.5L405.5 -70.9L403.8 -70.0ZM439.8 -197.1L444.6 -192.5L450.3 -191.9L448.4 -200.2L446.5 -205.2L448.4 -209.8L452.2 -216.6L455.0 -224.0L460.7 -229.4L471.1 -234.3L468.3 -235.9L455.0 -231.8L445.5 -220.2L443.6 -209.8L442.1 -203.3ZM452.2 -189.6L455.9 -187.4L455.4 -191.3L453.1 -191.3ZM523.2 -244.7L540.3 -244.7L540.3 -276.1L523.2 -276.1ZM601.0 -213.1L606.7 -209.1L613.3 -208.4L618.0 -213.1L616.1 -224.0L606.7 -227.8L601.0 -224.0ZM679.7 -194.2L684.4 -197.1L689.1 -195.9L684.4 -193.6ZM362.1 -249.4L371.6 -232.6L383.0 -240.2L392.4 -264.6L369.7 -266.8ZM589.4 -69.3L590.6 -70.0L592.4 -71.6L595.3 -72.1L598.1 -72.3L599.1 -73.2L600.6 -76.3L601.5 -75.1L603.8 -77.3L605.7 -79.2L606.7 -81.6L606.5 -84.4L607.2 -85.9L609.1 -86.4L609.5 -84.1L610.5 -81.6L609.7 -78.7L608.6 -76.8L608.4 -74.4L608.0 -72.5L608.4 -71.1L606.5 -70.7L605.1 -71.4L604.4 -70.0L601.9 -70.2L600.6 -69.3L599.1 -67.5L597.4 -68.4L597.8 -70.0L595.7 -70.2L593.4 -69.5L591.5 -68.6L589.6 -68.4ZM587.3 -67.5L589.4 -68.4L591.1 -67.0L590.7 -64.1L590.0 -62.5L588.8 -61.9L588.1 -63.0L588.1 -65.0L587.1 -65.7ZM592.3 -66.3L593.2 -68.4L595.5 -69.3L596.6 -68.2L595.7 -66.8L594.0 -67.2L593.2 -65.7ZM606.7 -86.6L608.4 -87.4L609.1 -89.2L611.4 -88.4L612.9 -87.9L615.2 -90.2L617.3 -91.2L616.3 -93.6L614.2 -93.3L611.8 -95.2L610.3 -97.1L609.7 -94.4L609.3 -91.5L607.4 -91.2L606.7 -89.4ZM610.1 -98.4L612.0 -100.1L613.3 -99.8L612.2 -103.4L612.4 -107.4L614.6 -106.9L612.7 -112.8L612.9 -117.7L612.2 -123.1L611.0 -123.1L611.2 -118.9L609.9 -115.8L610.5 -109.8L610.3 -105.4L610.5 -101.8ZM568.9 -45.0L570.1 -42.8L571.6 -44.2L572.4 -47.9L571.8 -49.6L569.9 -48.3ZM547.1 -37.1L549.0 -38.7L550.9 -38.9L551.7 -37.9L550.4 -35.5L548.8 -35.1L547.3 -35.7ZM492.7 -18.5L493.9 -18.3L495.4 -16.2L496.5 -14.3L495.9 -12.3L494.1 -11.2L492.9 -12.3L492.5 -15.2ZM568.8 -35.5L570.5 -35.9L573.1 -35.7L572.9 -33.1L571.8 -30.5L572.2 -27.4L573.9 -27.4L576.1 -26.4L576.5 -24.1L575.0 -24.9L573.7 -26.0L571.4 -26.4L569.9 -26.8L569.9 -28.4L568.6 -29.6L568.4 -31.3L569.5 -31.9ZM572.5 -13.3L573.5 -15.2L575.8 -16.4L577.9 -16.9L579.2 -18.7L581.1 -15.2L580.9 -12.0L579.4 -10.6L578.6 -11.6L576.7 -11.8L575.6 -14.8L574.1 -14.3ZM572.5 -22.7L574.8 -22.1L575.0 -20.0L573.5 -17.9L572.7 -20.2ZM576.9 -23.9L579.0 -23.3L579.6 -21.0L578.2 -19.1L577.1 -20.6ZM569.3 -25.8L571.6 -25.2L571.0 -23.3L569.5 -24.1ZM563.4 -16.0L565.5 -18.1L568.0 -21.6L567.6 -20.0L565.9 -17.5L564.0 -15.6ZM547.9 -3.0L549.2 -3.8L551.7 -3.0L552.6 -5.1L555.5 -6.1L557.4 -8.7L560.2 -9.9L561.5 -12.2L562.7 -13.3L564.2 -12.2L565.5 -10.8L567.4 -9.9L565.3 -8.3L564.6 -6.3L564.8 -3.6L566.7 -1.7L564.6 -0.8L563.8 1.5L562.7 3.0L562.1 4.9L561.2 7.2L558.5 7.6L555.9 6.1L553.0 6.3L550.2 5.5L550.0 3.0L548.5 1.7L547.9 -0.8ZM521.9 -10.6L524.2 -9.9L526.3 -9.5L528.0 -8.0L529.9 -5.7L532.0 -4.0L533.5 -3.2L535.6 -1.9L537.8 -0.6L538.4 1.9L540.1 4.4L541.8 5.7L542.2 7.6L542.0 11.0L539.6 11.2L537.5 9.5L535.2 7.6L532.7 4.7L531.2 1.9L529.5 -0.4L528.6 -3.2L526.3 -5.5L524.2 -7.0L522.1 -9.1ZM540.7 12.9L542.2 11.2L544.7 11.2L546.6 12.0L550.7 13.1L553.0 12.7L554.7 13.1L557.4 14.5L558.3 14.8L558.1 16.4L555.5 15.8L551.7 15.6L547.9 14.8L544.1 14.1L541.8 13.3ZM559.3 15.4L561.2 15.8L564.0 15.6L566.9 16.0L566.5 16.7L563.1 17.1L560.2 16.7ZM568.4 16.2L571.6 16.2L574.4 15.8L574.2 16.6L570.6 16.9L568.6 16.7ZM575.6 19.6L577.3 17.9L579.2 16.4L582.6 16.0L581.1 16.9L578.2 18.3L576.3 19.8ZM566.9 17.9L570.3 18.3L569.9 19.4L567.0 18.7ZM567.6 10.4L567.8 7.6L566.9 6.6L566.5 5.3L567.4 3.2L568.4 0.4L568.9 -1.1L570.5 -2.5L573.5 -1.9L576.7 -1.7L578.2 -3.0L577.5 -0.8L575.4 -0.8L571.6 -0.9L569.5 0.6L570.5 2.7L572.5 1.7L575.0 1.7L573.5 3.4L571.8 3.6L573.3 5.9L574.1 8.7L572.7 10.3L571.0 8.9L570.6 5.3L569.3 5.5L569.7 10.4ZM583.0 -4.2L585.1 -2.5L583.9 -0.8L585.6 1.1L583.5 1.1L583.0 -1.1ZM583.9 6.1L589.2 6.3L588.7 7.2L584.5 6.8ZM579.9 6.1L582.4 6.3L581.6 7.2L580.1 6.8ZM589.2 1.9L590.6 0.8L593.4 1.3L595.5 1.7L595.9 4.4L597.8 6.4L599.7 4.4L601.9 2.8L604.4 3.4L607.6 4.6L610.5 5.9L614.2 7.2L617.1 8.7L617.7 10.3L620.9 11.8L621.6 12.7L620.5 14.3L622.8 17.1L624.7 18.7L627.1 19.8L625.2 20.0L621.3 19.1L619.0 16.6L615.8 14.6L613.3 15.8L612.4 17.5L608.9 17.5L605.7 15.6L603.8 15.8L602.9 13.9L604.4 12.9L602.5 9.9L599.1 8.7L595.7 7.4L594.0 7.6L592.8 6.4L591.3 5.1L593.4 4.6L591.9 3.8L590.0 2.8ZM622.4 10.3L625.6 9.5L628.7 8.0L629.8 8.3L628.5 10.4L625.6 11.8L622.8 11.4ZM556.4 42.8L557.6 42.4L558.5 40.7L562.5 39.9L565.9 39.3L570.5 38.1L572.5 35.7L573.1 32.9L575.4 31.5L576.1 33.1L577.3 30.7L579.4 27.8L581.6 26.4L583.5 27.2L584.9 28.6L586.8 28.6L587.1 25.8L588.3 24.5L589.4 23.3L592.4 22.1L593.2 23.3L596.0 22.9L598.5 23.3L600.6 23.3L600.0 25.4L598.7 27.4L598.1 28.8L600.2 30.5L603.3 32.3L605.5 33.5L607.6 33.9L609.3 31.1L609.7 27.4L609.5 24.1L610.6 21.2L611.4 20.4L612.4 22.5L613.3 26.6L615.2 27.2L616.9 28.6L617.1 31.3L618.4 36.3L621.8 38.5L624.7 41.8L627.1 44.0L628.5 46.9L631.7 50.0L632.3 55.3L631.3 61.9L629.4 66.3L626.6 72.1L625.4 76.8L620.9 78.2L618.4 80.4L615.2 78.5L609.5 79.0L606.3 76.3L605.7 72.1L603.1 72.3L603.8 69.1L601.9 71.1L600.6 71.4L602.5 66.3L598.9 70.7L596.2 66.3L591.5 64.1L585.8 63.4L580.1 64.8L576.3 67.5L571.6 68.2L567.8 69.8L564.8 71.1L560.2 69.5L559.3 67.7L560.6 65.4L560.6 61.9L559.1 58.1L557.8 52.1L556.4 49.0L556.2 46.9L557.0 44.8ZM652.2 39.1L655.0 40.7L657.9 43.4L656.7 43.4L652.7 40.3ZM677.4 33.7L679.7 33.3L679.7 34.9L677.6 35.1ZM45.3 -38.5L47.4 -38.3L47.8 -37.7L46.1 -36.5L45.7 -37.3ZM25.6 -121.5L27.5 -122.4L23.7 -120.2L21.8 -119.2ZM619.0 -92.0L622.8 -96.5L620.9 -95.7ZM107.5 -105.1L105.2 -105.7L100.5 -109.8L97.8 -112.2L99.5 -112.5L104.3 -109.8L106.5 -107.4ZM228.8 -102.9L235.1 -108.9L236.0 -114.6L239.8 -107.4L241.3 -102.9L239.8 -100.1L236.0 -101.5L232.6 -102.9ZM219.0 -109.5L223.7 -108.0L220.9 -108.0ZM386.4 -80.2L387.7 -78.5L385.8 -78.7ZM362.1 -128.0L364.9 -128.7L364.8 -126.4L362.5 -126.0ZM375.8 -135.3L377.1 -134.6L376.3 -132.5ZM442.7 -24.1L444.6 -24.3L443.6 -23.5ZM517.0 -25.8L517.6 -22.9L516.8 -21.0ZM357.4 -7.0L358.1 -6.8L357.6 -6.1ZM345.8 -81.9L347.7 -82.4L347.3 -81.1ZM311.3 -55.8L315.7 -57.5L314.7 -55.5ZM447.0 -53.0L447.8 -52.8L447.4 -52.3ZM656.0 -126.7L657.3 -124.7L655.4 -126.0ZM634.3 9.7L635.9 10.6L637.0 12.9L636.1 13.1L634.7 11.4ZM637.9 12.5L640.6 13.7L644.2 16.0L643.6 16.4L639.8 14.5ZM643.8 17.5L646.1 18.3L645.9 19.1L644.2 18.7ZM645.7 15.8L647.0 16.7L647.6 18.5L646.7 18.1ZM647.0 19.4L648.9 20.2L648.6 20.8L647.2 20.2ZM626.8 4.9L629.0 5.9L631.3 8.3L630.9 9.1L628.5 7.2ZM656.9 28.2L658.2 28.8L658.0 29.9L657.1 29.8ZM659.2 31.1L660.5 33.3L660.1 34.3L659.0 31.9ZM24.3 -121.5L26.9 -122.1L26.9 -120.5L24.3 -120.2ZM20.3 -119.6L22.9 -120.2L22.9 -118.6L20.3 -118.3ZM16.7 -118.0L19.3 -118.6L19.3 -117.0L16.7 -116.7ZM12.3 -116.7L15.0 -117.4L15.0 -115.8L12.3 -115.5ZM9.1 -116.1L11.8 -116.4L11.8 -115.2L9.1 -114.9ZM5.3 -115.5L8.0 -115.8L8.0 -114.6L5.3 -114.3ZM2.1 -115.2L4.7 -115.8L4.7 -114.3L2.1 -114.0ZM680.2 -115.5L682.9 -115.8L682.9 -114.6L680.2 -114.3ZM676.4 -116.1L679.1 -116.4L679.1 -115.2L676.4 -114.9ZM669.8 -118.0L672.5 -118.6L672.5 -117.0L669.8 -116.7ZM667.5 -119.2L670.2 -119.6L670.2 -118.3L667.5 -118.0Z" fill="#0f0f0f"/><path d="M73.9 -186.3L73.9 -144.2L77.7 -143.1L80.6 -139.3L84.4 -141.9L88.2 -137.1L92.9 -128.7L94.8 -128.4L94.8 -124.4M107.5 -106.9L160.8 -106.9L160.8 -108.0L171.4 -104.0L181.1 -99.8L184.8 -96.5L184.8 -89.2L183.9 -87.9L191.5 -89.9L191.5 -91.2L196.2 -93.6L199.1 -95.7L205.7 -95.7L208.5 -99.8L210.1 -102.3L212.3 -102.0L212.7 -97.4L214.2 -95.7M119.2 -65.2L123.8 -65.7L130.8 -62.5L136.1 -62.5L139.3 -63.6L143.1 -58.8L146.0 -57.5L149.0 -59.2L152.6 -54.3L157.0 -50.9M166.5 -27.8L166.5 -29.4L168.9 -30.7L168.0 -33.2L172.2 -34.5L173.8 -35.7M172.1 -34.3L172.1 -30.5L174.0 -30.1M172.0 -27.6L175.4 -25.4M174.0 -30.1L177.3 -26.4L180.1 -27.0L183.5 -28.8M175.4 -24.9L180.5 -21.4L182.6 -21.0M182.8 -18.3L184.1 -17.3L184.1 -15.4M204.4 -21.2L203.8 -17.1L204.8 -13.3L208.5 -13.3L213.3 -11.8L212.7 -8.5L213.7 -3.8L214.4 -2.3M227.5 -16.2L225.6 -10.4L226.2 -9.1L227.5 -9.9M243.4 -8.0L238.9 -4.4L235.1 -3.6L229.4 -2.7L227.5 -4.7L219.9 -7.2L219.0 -2.7L214.2 -3.8L209.5 -1.9L208.9 1.9L208.7 8.2L202.9 9.5L201.9 14.1L203.8 18.1L207.6 21.0L210.4 21.0L217.1 19.1L219.9 23.9L225.6 25.8L227.5 29.8L231.3 31.7L232.2 34.7L231.3 38.7L235.1 42.8L237.9 50.0L239.3 53.4L235.7 55.8L232.1 60.1L239.8 67.9M238.9 -11.0L238.9 -4.4M233.2 -11.4L235.1 -3.6M189.0 6.4L192.4 9.5L198.1 2.8L201.9 2.3L208.5 8.2M191.9 -2.7L198.1 0.0L201.9 2.3M207.8 35.5L209.5 33.7L210.4 28.8L211.0 23.9L209.5 21.0M210.4 34.7L212.0 41.8L213.9 44.4L211.8 47.9L210.4 54.3L208.5 66.3L205.7 82.9L204.8 104.0M213.9 44.4L222.6 43.2L231.3 38.7M222.6 43.2L232.2 50.0L237.7 50.2M337.8 -91.5L347.3 -88.9M324.4 -87.6L328.9 -87.1L328.2 -82.9L327.4 -80.4L327.2 -76.1M346.0 -113.1L349.2 -109.8L352.2 -108.3L356.8 -106.9L355.7 -102.9L352.6 -99.0L354.5 -97.9L353.8 -93.3L355.5 -92.6M347.7 -114.0L352.2 -113.4L352.6 -112.2L353.2 -108.3M354.9 -119.9L353.0 -115.5L352.6 -112.2M355.7 -102.9L359.3 -102.9L361.2 -102.0L365.9 -102.6L367.4 -106.0M354.5 -98.2L358.3 -99.5L361.2 -100.6L364.6 -101.2L367.2 -99.8L367.2 -97.4M364.2 -110.7L368.4 -112.8L372.5 -111.0L376.9 -108.6L373.5 -105.7L369.7 -106.9L367.4 -106.0L364.2 -110.7M368.2 -121.8L368.9 -117.4L369.7 -112.8M357.6 -125.0L360.0 -124.7M373.5 -105.7L372.5 -102.6L371.6 -100.4L367.2 -99.8M373.5 -104.0L376.9 -103.4L380.1 -105.4L383.9 -105.1M376.9 -108.6L383.9 -106.9L386.8 -111.3L385.8 -115.8L385.8 -122.1L384.5 -123.4L378.2 -123.4M383.9 -105.1L381.1 -99.3L378.2 -98.7L376.3 -97.9L372.5 -99.8L371.6 -100.4M383.9 -105.1L391.5 -104.6L394.7 -99.8L394.7 -97.1L397.4 -96.5M384.3 -93.6L388.6 -92.3L393.4 -93.1L395.5 -92.3M381.1 -99.3L384.3 -93.6M383.7 -88.7L384.7 -86.1L391.1 -87.1L394.3 -87.9M391.1 -87.1L390.5 -84.9M378.0 -87.6L378.2 -90.5L377.3 -95.2L371.6 -96.3L370.6 -97.1M380.1 -88.4L383.7 -88.7L384.3 -93.6M380.9 -85.1L384.7 -86.1M374.4 -96.0L377.3 -95.2M376.3 -89.2L374.6 -90.7L371.6 -95.7M385.8 -114.6L392.4 -114.9L399.1 -114.3L402.9 -116.7L407.6 -116.4L412.3 -111.0L417.1 -108.6L416.5 -103.4L413.7 -101.5M399.1 -114.3L401.5 -119.6L400.0 -124.7L394.7 -129.1L391.5 -127.7L388.3 -122.1L385.8 -122.1M381.1 -129.1L391.5 -127.7M394.7 -129.1L394.0 -133.2L393.4 -135.7L394.3 -141.2M387.3 -135.3L393.0 -133.9M394.3 -145.0L401.0 -154.6L398.1 -159.2L398.1 -176.4L395.7 -182.0L396.2 -186.9L399.6 -187.4M386.8 -167.3L385.8 -176.9L380.1 -183.1L388.6 -181.0L391.5 -188.0L394.7 -188.0L396.2 -186.9M362.9 -139.7L364.9 -146.9L364.4 -157.1L367.8 -161.4L370.6 -169.6L375.0 -180.0L380.1 -183.1M337.8 -71.1L338.0 -65.2L333.7 -63.0L324.8 -56.8L324.8 -54.7L316.2 -54.7M324.8 -54.7L324.8 -51.1L318.5 -51.1L318.5 -45.9L316.6 -41.3L309.0 -41.3M324.8 -53.8L332.1 -49.0L328.9 -49.0L330.8 -31.3L319.3 -29.6L318.1 -28.4L310.0 -31.1M332.1 -49.0L343.5 -40.7L349.2 -37.1L352.6 -37.7L363.8 -45.9M357.2 -75.4L356.8 -68.6L359.3 -64.3L360.0 -60.1L359.3 -51.9L360.4 -47.7L363.8 -45.9M363.1 -66.6L360.6 -63.0L360.0 -60.1M363.8 -45.9L367.8 -44.2L369.7 -44.8L386.8 -37.7L386.8 -38.7L388.6 -42.8L388.6 -63.2M388.6 -42.8L411.2 -42.8M369.7 -44.8L370.6 -40.3L367.8 -25.8L367.0 -26.4M386.8 -37.7L383.9 -30.7L383.0 -25.8L385.8 -19.1L384.7 -21.0M349.2 -37.1L347.9 -29.6L341.6 -28.6L340.3 -28.8L337.5 -27.8L330.8 -19.8M319.4 -23.7L318.1 -28.4M319.4 -23.7L325.1 -20.0L330.8 -19.8L335.9 -18.3L342.2 -21.0L345.8 -22.7L348.1 -22.3M335.9 -18.3L335.2 -9.7M342.2 -21.0L343.5 -11.6M345.8 -22.7L346.4 -12.2M309.6 -23.7L315.3 -23.9L319.4 -23.7M312.8 -20.8L316.0 -19.1L321.3 -15.8L325.1 -14.3L327.0 -8.3M316.6 -15.2L319.4 -15.8L321.3 -15.8M346.4 -12.2L348.1 -19.1L348.1 -22.3L349.2 -25.8L354.5 -24.9L361.3 -25.4L367.0 -26.4L368.7 -23.9L367.2 -20.6L363.6 -13.3L359.3 -11.4L357.4 -8.5M368.7 -23.9L370.6 -19.1L368.7 -14.3L371.6 -14.5L369.7 -6.6L372.0 -4.2L376.3 -8.0L383.9 -8.0L393.2 -9.7L393.4 -7.6L400.0 -7.2M370.6 -14.3L377.3 -17.1L383.9 -21.0M385.8 -19.1L390.5 -17.7L398.1 -19.2L404.8 -20.0L406.1 -18.1M411.2 -42.8L414.4 -34.7L410.4 -27.4L406.7 -21.0L407.6 -15.2L404.8 -14.8L407.0 -11.4L409.3 -8.7L419.0 -7.4M410.4 -27.4L415.2 -27.8L421.4 -23.9M419.9 3.2L419.0 -7.4L424.7 -9.1L432.1 -15.2L422.8 -21.0M415.6 8.9L405.5 1.9L405.7 -1.9L407.6 -9.5L409.3 -8.7M400.0 -7.2L405.7 -7.0M362.7 -4.2L359.8 -4.2M362.7 -4.2L366.5 -4.2L368.7 -4.2L372.0 -4.2M362.5 9.1L365.9 4.7L368.6 8.5L372.5 11.2M364.4 11.4L372.5 11.2L373.5 15.2L378.2 15.2L383.0 21.0L386.8 21.0L386.8 24.9L383.0 24.9L383.0 30.7L385.8 33.7M386.8 21.0L393.4 22.9L397.7 25.8L398.1 15.6L399.6 16.2L403.6 17.9L405.7 18.1M396.2 4.7L397.7 2.7L397.4 8.5L399.6 16.2M363.6 33.3L386.8 33.7L389.2 34.3M379.2 42.8L379.2 48.6M372.5 56.6L379.2 56.2L379.2 48.6L389.6 50.2L396.2 43.2L400.6 43.6L401.9 52.1M400.6 43.6L403.8 36.7L399.1 30.7L404.2 26.8L407.6 21.9L417.8 20.0M389.2 34.3L396.2 30.7L399.1 30.7M379.2 42.8L381.1 34.7L385.8 33.7M409.5 -74.7L412.3 -74.9L421.4 -75.8M420.1 -86.6L423.7 -85.6L426.2 -82.1L425.2 -78.7L426.2 -76.1L421.4 -75.8M426.2 -76.1L428.5 -70.9L428.5 -66.3L431.3 -64.1L432.2 -59.7M421.4 -75.8L419.0 -69.8L415.2 -64.8L411.4 -63.0L411.2 -58.1M415.2 -64.8L426.0 -57.9L429.4 -57.7L432.2 -59.4M408.6 -65.7L407.6 -58.6M408.9 -66.3L410.4 -70.0M422.4 -31.5L429.4 -33.3L434.1 -35.9L439.8 -36.7L441.7 -31.9M439.1 -47.3L446.5 -44.2L445.5 -38.7L439.8 -36.7M447.8 -50.7L447.0 -47.5M443.4 -76.3L449.3 -78.5L455.9 -74.7L457.3 -72.3L456.7 -69.3L455.9 -66.3L456.7 -63.0L458.4 -61.9L460.3 -58.4L457.8 -53.8L461.3 -52.8L458.0 -49.4M456.7 -59.4L467.3 -59.4L473.0 -63.0L474.9 -68.6L476.8 -74.4L482.5 -75.6M457.3 -72.3L463.5 -75.8L469.8 -76.1L474.0 -77.0L476.8 -77.7L483.2 -76.3M470.5 -46.3L474.9 -50.0L475.9 -54.9L482.5 -61.9L482.9 -68.6L488.7 -72.1M488.7 -72.1L491.0 -68.6L490.6 -63.0L493.5 -60.5L495.8 -60.5L500.5 -56.4L508.1 -55.1L510.0 -53.8L515.7 -54.9L520.4 -58.1L525.1 -55.3L526.1 -46.5L528.0 -47.9L530.8 -41.8L533.7 -43.4L537.5 -44.2L543.2 -44.4L546.0 -41.8M493.5 -57.3L500.5 -53.8L508.5 -52.1M509.0 -42.2L510.0 -51.1L516.8 -49.0L516.2 -40.7M515.7 -54.9L515.7 -52.8L510.0 -53.0M526.1 -46.5L520.4 -46.5L516.8 -41.8M530.8 -39.5L528.0 -32.7L528.9 -29.4L528.0 -19.6M530.8 -39.5L532.7 -34.3L539.4 -33.7L541.3 -27.4M541.3 -27.4L535.6 -22.9M538.4 -43.6L539.4 -37.7L545.1 -27.8M545.1 -27.8L542.2 -21.0L539.4 -19.8M531.2 -12.2L534.6 -11.6M430.4 -98.4L429.8 -106.3L437.6 -114.9L446.8 -111.6L456.9 -111.3L455.0 -115.8L458.2 -121.8L465.4 -124.1L472.1 -126.7L480.6 -122.1L486.3 -122.8L488.7 -119.9L493.9 -112.8L499.2 -112.8L504.3 -108.3L506.8 -107.4M506.8 -107.4L503.3 -101.2L497.7 -97.1L492.9 -95.7L493.3 -88.4M493.3 -88.4L483.4 -90.2L475.9 -88.4L470.2 -84.9L466.4 -90.2L460.7 -91.8L452.2 -97.1L447.4 -95.7L447.4 -86.1L441.7 -88.1M447.4 -86.1L452.2 -89.2L456.9 -85.6L462.6 -80.4L467.3 -76.6M493.3 -88.4L483.4 -83.6L480.6 -81.6L483.2 -76.3M475.9 -88.4L479.6 -84.1L474.9 -81.6L470.2 -80.4L469.8 -76.1M506.8 -107.4L513.8 -97.1L524.2 -89.7L540.3 -86.9L552.6 -92.3L558.3 -95.2L565.0 -100.4L568.2 -101.8L561.2 -109.2M506.8 -107.4L514.7 -111.3L527.0 -115.8L534.6 -114.9L542.2 -110.7L555.5 -108.6L561.2 -109.2M561.2 -109.2L568.8 -118.0L580.1 -118.3L583.9 -108.3L589.6 -103.2L596.6 -104.6L593.4 -95.7L589.6 -89.9L588.8 -88.9M588.8 -88.9L585.8 -87.9L581.6 -87.4L576.9 -82.6M577.9 -78.0L581.5 -77.7L584.5 -79.4M416.9 -91.5L423.7 -89.4L429.4 -87.4L433.2 -87.4M549.0 -3.6L552.6 -2.3L557.4 -2.8L560.2 -6.6L564.0 -8.0M608.6 4.9L608.6 17.3M558.3 -8.9L559.6 -9.3M423.7 -85.6L429.4 -85.4L427.5 -81.6L432.2 -79.0" stroke="#2a2a2a" stroke-width="0.9" fill="none" stroke-linejoin="round"/><path d="M429.8 -94.7L431.3 -90.5L433.4 -87.4L435.1 -84.4L436.6 -83.6L434.9 -81.6L434.1 -79.2L434.1 -77.0L437.0 -75.6L439.8 -74.9L443.4 -75.4L443.2 -78.0L442.1 -81.1L441.7 -82.9L441.7 -85.9L441.0 -88.7L439.8 -90.5L438.7 -93.6L440.4 -95.7L441.7 -96.3L441.9 -99.8L439.8 -100.9L437.0 -100.4L434.5 -99.5L433.2 -97.9L431.3 -97.4ZM441.7 -85.9L444.6 -84.9L444.2 -87.4L442.1 -87.6ZM394.3 -86.9L396.4 -85.9L400.0 -85.6L402.9 -87.4L405.7 -87.9L408.0 -87.9L410.4 -86.1L414.2 -85.1L418.0 -85.4L420.1 -86.9L419.9 -89.7L417.1 -91.8L413.9 -94.1L412.0 -95.2L410.6 -96.3L408.6 -96.0L406.7 -94.4L404.8 -94.4L403.1 -96.5L404.9 -98.2L401.9 -99.5L399.6 -99.8L397.4 -96.5L395.7 -94.1L394.3 -91.2L394.1 -88.7ZM407.2 -97.9L408.6 -96.8L410.6 -96.8L413.3 -99.0L415.6 -101.8L413.7 -101.5L410.4 -100.1L408.0 -99.3ZM204.9 -20.6L206.3 -20.0L206.6 -17.7L204.8 -18.3ZM478.3 -213.1L478.7 -200.2L477.9 -188.5L479.1 -177.9L480.0 -171.0L482.1 -172.0L488.7 -173.9L487.6 -176.4L483.2 -179.4L481.5 -191.9L483.1 -213.1Z" fill="#3d3d3d"/></g></defs><use href="#grat" transform="translate(-114.9 210.0)"/><use href="#grat" transform="translate(567.6 210.0)"/><use href="#grat" transform="translate(1250.1 210.0)"/><use href="#wld" transform="translate(-114.9 210.0)"/><use href="#wld" transform="translate(567.6 210.0)"/><use href="#wld" transform="translate(1250.1 210.0)"/></svg>
 <div class="lbl" style="left:44px;top:97px;">NORTH<br>AMERICA</div>
 <div class="lbl" style="left:726px;top:97px;">NORTH<br>AMERICA</div>
 <div class="lbl" style="left:1409px;top:97px;">NORTH<br>AMERICA</div>
 <div class="lbl" style="left:360px;top:120px;">ASIA</div>
 <div class="lbl" style="left:1043px;top:120px;">ASIA</div>
 <div class="lbl" style="left:1726px;top:120px;">ASIA</div>
 <div class="lbl" style="left:279px;top:188px;">AFRICA</div>
 <div class="lbl" style="left:962px;top:188px;">AFRICA</div>
 <div class="lbl" style="left:1645px;top:188px;">AFRICA</div>
 <div class="lbl" style="left:111px;top:226px;">SOUTH<br>AMERICA</div>
 <div class="lbl" style="left:793px;top:226px;">SOUTH<br>AMERICA</div>
 <div class="lbl" style="left:1476px;top:226px;">SOUTH<br>AMERICA</div>
 <div class="ocean" style="left:-2.5px;top:202.5px;">Pacific<br>Ocean</div>
 <div class="ocean" style="left:680px;top:202.5px;">Pacific<br>Ocean</div>
 <div class="ocean" style="left:1363px;top:202.5px;">Pacific<br>Ocean</div>
 <div class="ocean" style="left:360px;top:220.5px;">Indian<br>Ocean</div>
 <div class="ocean" style="left:1043px;top:220.5px;">Indian<br>Ocean</div>
 <div class="ocean" style="left:1726px;top:220.5px;">Indian<br>Ocean</div>
 <!-- marker -->
 <div class="abs" style="left:902.2px;top:100.5px;width:19px;height:19px;border-radius:50%;border:2px solid #8fdc88;background:rgba(115,191,105,0.55);"></div>
 <!-- zoom control -->
 <div class="abs" style="left:8px;top:0;width:20px;height:39px;background:#fff;border-radius:0 0 2px 2px;">
  <div class="abs" style="left:0;top:18px;width:20px;height:1px;background:#ccc;"></div>
  <div class="abs" style="left:6px;top:8.2px;width:8px;height:1.6px;background:#111;"></div>
  <div class="abs" style="left:9.2px;top:5px;width:1.6px;height:8px;background:#111;"></div>
  <div class="abs" style="left:6px;top:28px;width:8px;height:1.8px;background:#111;"></div>
 </div>
 <!-- legend -->
 <div class="abs" style="left:7px;top:194px;width:81px;height:56px;background:rgba(255,255,255,0.82);border-radius:4px;">
  <div class="abs" style="left:5px;top:4px;width:12px;height:12px;background:#a1d99b;"></div>
  <div class="abs" style="left:5px;top:16px;width:12px;height:12px;background:#f7df7f;"></div>
  <div class="abs" style="left:5px;top:28px;width:12px;height:12px;background:#fd8d47;"></div>
  <div class="abs" style="left:5px;top:40px;width:12px;height:12px;background:#d34a5e;"></div>
  <div class="t" style="left:23px;top:4px;font-size:9.2px;line-height:12px;color:#555;">&lt; 500<br>500&ndash;5000<br>5000&ndash;50000<br>50000+</div>
 </div>
 <!-- attribution -->
 <div class="abs" style="left:1648px;top:246px;width:135px;height:10px;background:rgba(255,255,255,0.8);">
  <div class="t" style="left:3px;top:0;font-size:7.6px;line-height:10px;color:#333;"><span style="color:#0078a8">Leaflet</span> <span style="color:#999">|</span> &copy; <span style="color:#0078a8">OpenStreetMap</span> &copy; <span style="color:#0078a8">CartoDB</span></div>
 </div>
</div>

<svg class="abs" style="left:0;top:0" width="1810" height="946" font-family="Liberation Sans, sans-serif"><line x1="53" y1="348.5" x2="1620" y2="348.5" stroke="#1f2025" stroke-width="1"/><text x="50.5" y="350.2" font-size="8.5" fill="#c0c1c8" text-anchor="end" font-weight="normal">100 ops/m</text><line x1="53" y1="372.5" x2="1620" y2="372.5" stroke="#1f2025" stroke-width="1"/><text x="50.5" y="374.2" font-size="8.5" fill="#c0c1c8" text-anchor="end" font-weight="normal">90 ops/m</text><line x1="53" y1="396.5" x2="1620" y2="396.5" stroke="#1f2025" stroke-width="1"/><text x="50.5" y="398.2" font-size="8.5" fill="#c0c1c8" text-anchor="end" font-weight="normal">80 ops/m</text><line x1="53" y1="420.5" x2="1620" y2="420.5" stroke="#1f2025" stroke-width="1"/><text x="50.5" y="422.2" font-size="8.5" fill="#c0c1c8" text-anchor="end" font-weight="normal">70 ops/m</text><line x1="53" y1="444.5" x2="1620" y2="444.5" stroke="#1f2025" stroke-width="1"/><text x="50.5" y="446.2" font-size="8.5" fill="#c0c1c8" text-anchor="end" font-weight="normal">60 ops/m</text><line x1="53" y1="468.5" x2="1620" y2="468.5" stroke="#1f2025" stroke-width="1"/><text x="50.5" y="470.2" font-size="8.5" fill="#c0c1c8" text-anchor="end" font-weight="normal">50 ops/m</text><line x1="53" y1="492.5" x2="1620" y2="492.5" stroke="#1f2025" stroke-width="1"/><text x="50.5" y="494.2" font-size="8.5" fill="#c0c1c8" text-anchor="end" font-weight="normal">40 ops/m</text><line x1="53" y1="516.5" x2="1620" y2="516.5" stroke="#1f2025" stroke-width="1"/><text x="50.5" y="518.2" font-size="8.5" fill="#c0c1c8" text-anchor="end" font-weight="normal">30 ops/m</text><line x1="53" y1="540.5" x2="1620" y2="540.5" stroke="#1f2025" stroke-width="1"/><text x="50.5" y="542.2" font-size="8.5" fill="#c0c1c8" text-anchor="end" font-weight="normal">20 ops/m</text><line x1="53" y1="564.5" x2="1620" y2="564.5" stroke="#1f2025" stroke-width="1"/><text x="50.5" y="566.2" font-size="8.5" fill="#c0c1c8" text-anchor="end" font-weight="normal">10 ops/m</text><line x1="53" y1="588.5" x2="1620" y2="588.5" stroke="#1f2025" stroke-width="1"/><text x="50.5" y="590.2" font-size="8.5" fill="#c0c1c8" text-anchor="end" font-weight="normal">0 ops/m</text><line x1="105.5" y1="348" x2="105.5" y2="588" stroke="#1f2025" stroke-width="1"/><text x="105.3" y="598.8" font-size="8" fill="#c0c1c8" text-anchor="middle" font-weight="normal">01:40:00</text><line x1="157.5" y1="348" x2="157.5" y2="588" stroke="#1f2025" stroke-width="1"/><text x="157.4" y="598.8" font-size="8" fill="#c0c1c8" text-anchor="middle" font-weight="normal">01:41:00</text><line x1="210.5" y1="348" x2="210.5" y2="588" stroke="#1f2025" stroke-width="1"/><text x="209.5" y="598.8" font-size="8" fill="#c0c1c8" text-anchor="middle" font-weight="normal">01:42:00</text><line x1="262.5" y1="348" x2="262.5" y2="588" stroke="#1f2025" stroke-width="1"/><text x="261.6" y="598.8" font-size="8" fill="#c0c1c8" text-anchor="middle" font-weight="normal">01:43:00</text><line x1="314.5" y1="348" x2="314.5" y2="588" stroke="#1f2025" stroke-width="1"/><text x="313.7" y="598.8" font-size="8" fill="#c0c1c8" text-anchor="middle" font-weight="normal">01:44:00</text><line x1="366.5" y1="348" x2="366.5" y2="588" stroke="#1f2025" stroke-width="1"/><text x="365.8" y="598.8" font-size="8" fill="#c0c1c8" text-anchor="middle" font-weight="normal">01:45:00</text><line x1="418.5" y1="348" x2="418.5" y2="588" stroke="#1f2025" stroke-width="1"/><text x="417.9" y="598.8" font-size="8" fill="#c0c1c8" text-anchor="middle" font-weight="normal">01:46:00</text><line x1="470.5" y1="348" x2="470.5" y2="588" stroke="#1f2025" stroke-width="1"/><text x="470" y="598.8" font-size="8" fill="#c0c1c8" text-anchor="middle" font-weight="normal">01:47:00</text><line x1="522.5" y1="348" x2="522.5" y2="588" stroke="#1f2025" stroke-width="1"/><text x="522.1" y="598.8" font-size="8" fill="#c0c1c8" text-anchor="middle" font-weight="normal">01:48:00</text><line x1="574.5" y1="348" x2="574.5" y2="588" stroke="#1f2025" stroke-width="1"/><text x="574.2" y="598.8" font-size="8" fill="#c0c1c8" text-anchor="middle" font-weight="normal">01:49:00</text><line x1="626.5" y1="348" x2="626.5" y2="588" stroke="#1f2025" stroke-width="1"/><text x="626.3" y="598.8" font-size="8" fill="#c0c1c8" text-anchor="middle" font-weight="normal">01:50:00</text><line x1="678.5" y1="348" x2="678.5" y2="588" stroke="#1f2025" stroke-width="1"/><text x="678.4" y="598.8" font-size="8" fill="#c0c1c8" text-anchor="middle" font-weight="normal">01:51:00</text><line x1="731.5" y1="348" x2="731.5" y2="588" stroke="#1f2025" stroke-width="1"/><text x="730.5" y="598.8" font-size="8" fill="#c0c1c8" text-anchor="middle" font-weight="normal">01:52:00</text><line x1="783.5" y1="348" x2="783.5" y2="588" stroke="#1f2025" stroke-width="1"/><text x="782.6" y="598.8" font-size="8" fill="#c0c1c8" text-anchor="middle" font-weight="normal">01:53:00</text><line x1="835.5" y1="348" x2="835.5" y2="588" stroke="#1f2025" stroke-width="1"/><text x="834.7" y="598.8" font-size="8" fill="#c0c1c8" text-anchor="middle" font-weight="normal">01:54:00</text><line x1="887.5" y1="348" x2="887.5" y2="588" stroke="#1f2025" stroke-width="1"/><text x="886.9" y="598.8" font-size="8" fill="#c0c1c8" text-anchor="middle" font-weight="normal">01:55:00</text><line x1="939.5" y1="348" x2="939.5" y2="588" stroke="#1f2025" stroke-width="1"/><text x="939" y="598.8" font-size="8" fill="#c0c1c8" text-anchor="middle" font-weight="normal">01:56:00</text><line x1="991.5" y1="348" x2="991.5" y2="588" stroke="#1f2025" stroke-width="1"/><text x="991.1" y="598.8" font-size="8" fill="#c0c1c8" text-anchor="middle" font-weight="normal">01:57:00</text><line x1="1043.5" y1="348" x2="1043.5" y2="588" stroke="#1f2025" stroke-width="1"/><text x="1043.2" y="598.8" font-size="8" fill="#c0c1c8" text-anchor="middle" font-weight="normal">01:58:00</text><line x1="1095.5" y1="348" x2="1095.5" y2="588" stroke="#1f2025" stroke-width="1"/><text x="1095.3" y="598.8" font-size="8" fill="#c0c1c8" text-anchor="middle" font-weight="normal">01:59:00</text><line x1="1147.5" y1="348" x2="1147.5" y2="588" stroke="#1f2025" stroke-width="1"/><text x="1147.4" y="598.8" font-size="8" fill="#c0c1c8" text-anchor="middle" font-weight="normal">02:00:00</text><line x1="1199.5" y1="348" x2="1199.5" y2="588" stroke="#1f2025" stroke-width="1"/><text x="1199.5" y="598.8" font-size="8" fill="#c0c1c8" text-anchor="middle" font-weight="normal">02:01:00</text><line x1="1252.5" y1="348" x2="1252.5" y2="588" stroke="#1f2025" stroke-width="1"/><text x="1251.6" y="598.8" font-size="8" fill="#c0c1c8" text-anchor="middle" font-weight="normal">02:02:00</text><line x1="1304.5" y1="348" x2="1304.5" y2="588" stroke="#1f2025" stroke-width="1"/><text x="1303.7" y="598.8" font-size="8" fill="#c0c1c8" text-anchor="middle" font-weight="normal">02:03:00</text><line x1="1356.5" y1="348" x2="1356.5" y2="588" stroke="#1f2025" stroke-width="1"/><text x="1355.8" y="598.8" font-size="8" fill="#c0c1c8" text-anchor="middle" font-weight="normal">02:04:00</text><line x1="1408.5" y1="348" x2="1408.5" y2="588" stroke="#1f2025" stroke-width="1"/><text x="1407.9" y="598.8" font-size="8" fill="#c0c1c8" text-anchor="middle" font-weight="normal">02:05:00</text><line x1="1460.5" y1="348" x2="1460.5" y2="588" stroke="#1f2025" stroke-width="1"/><text x="1460" y="598.8" font-size="8" fill="#c0c1c8" text-anchor="middle" font-weight="normal">02:06:00</text><line x1="1512.5" y1="348" x2="1512.5" y2="588" stroke="#1f2025" stroke-width="1"/><text x="1512.1" y="598.8" font-size="8" fill="#c0c1c8" text-anchor="middle" font-weight="normal">02:07:00</text><line x1="1564.5" y1="348" x2="1564.5" y2="588" stroke="#1f2025" stroke-width="1"/><text x="1564.2" y="598.8" font-size="8" fill="#c0c1c8" text-anchor="middle" font-weight="normal">02:08:00</text><line x1="1616.5" y1="348" x2="1616.5" y2="588" stroke="#1f2025" stroke-width="1"/><text x="1616.3" y="598.8" font-size="8" fill="#c0c1c8" text-anchor="middle" font-weight="normal">02:09:00</text><line x1="103" y1="588.5" x2="1616.3" y2="588.5" stroke="#243a27" stroke-width="1"/><circle cx="105.3" cy="588.5" r="1.6" fill="#73bf69"/><circle cx="157.4" cy="588.5" r="1.6" fill="#73bf69"/><circle cx="209.5" cy="588.5" r="1.6" fill="#73bf69"/><circle cx="261.6" cy="588.5" r="1.6" fill="#73bf69"/><circle cx="313.7" cy="588.5" r="1.6" fill="#73bf69"/><circle cx="365.8" cy="588.5" r="1.6" fill="#73bf69"/><circle cx="417.9" cy="588.5" r="1.6" fill="#73bf69"/><circle cx="470" cy="588.5" r="1.6" fill="#73bf69"/><circle cx="522.1" cy="588.5" r="1.6" fill="#73bf69"/><circle cx="574.2" cy="588.5" r="1.6" fill="#73bf69"/><circle cx="626.3" cy="588.5" r="1.6" fill="#73bf69"/><circle cx="678.4" cy="588.5" r="1.6" fill="#73bf69"/><circle cx="730.5" cy="588.5" r="1.6" fill="#73bf69"/><circle cx="782.6" cy="588.5" r="1.6" fill="#73bf69"/><circle cx="834.7" cy="588.5" r="1.6" fill="#73bf69"/><circle cx="886.9" cy="588.5" r="1.6" fill="#73bf69"/><circle cx="939" cy="588.5" r="1.6" fill="#73bf69"/><circle cx="991.1" cy="588.5" r="1.6" fill="#73bf69"/><circle cx="1043.2" cy="588.5" r="1.6" fill="#73bf69"/><circle cx="1095.3" cy="588.5" r="1.6" fill="#73bf69"/><circle cx="1147.4" cy="588.5" r="1.6" fill="#73bf69"/><circle cx="1199.5" cy="588.5" r="1.6" fill="#73bf69"/><circle cx="1251.6" cy="588.5" r="1.6" fill="#73bf69"/><circle cx="1303.7" cy="588.5" r="1.6" fill="#73bf69"/><circle cx="1355.8" cy="588.5" r="1.6" fill="#73bf69"/><circle cx="1407.9" cy="588.5" r="1.6" fill="#73bf69"/><circle cx="1460" cy="588.5" r="1.6" fill="#73bf69"/><circle cx="1512.1" cy="588.5" r="1.6" fill="#73bf69"/><circle cx="1564.2" cy="588.5" r="1.6" fill="#73bf69"/><circle cx="1616.3" cy="588.5" r="1.6" fill="#73bf69"/><line x1="53" y1="652.5" x2="1522" y2="652.5" stroke="#1f2025" stroke-width="1"/><text x="50.5" y="654.2" font-size="8.5" fill="#c0c1c8" text-anchor="end" font-weight="normal">100 ops/m</text><line x1="53" y1="675.5" x2="1522" y2="675.5" stroke="#1f2025" stroke-width="1"/><text x="50.5" y="676.8" font-size="8.5" fill="#c0c1c8" text-anchor="end" font-weight="normal">80 ops/m</text><line x1="53" y1="697.5" x2="1522" y2="697.5" stroke="#1f2025" stroke-width="1"/><text x="50.5" y="699.4" font-size="8.5" fill="#c0c1c8" text-anchor="end" font-weight="normal">60 ops/m</text><line x1="53" y1="720.5" x2="1522" y2="720.5" stroke="#1f2025" stroke-width="1"/><text x="50.5" y="722" font-size="8.5" fill="#c0c1c8" text-anchor="end" font-weight="normal">40 ops/m</text><line x1="53" y1="742.5" x2="1522" y2="742.5" stroke="#1f2025" stroke-width="1"/><text x="50.5" y="744.6" font-size="8.5" fill="#c0c1c8" text-anchor="end" font-weight="normal">20 ops/m</text><line x1="53" y1="765.5" x2="1522" y2="765.5" stroke="#1f2025" stroke-width="1"/><text x="50.5" y="767.2" font-size="8.5" fill="#c0c1c8" text-anchor="end" font-weight="normal">0 ops/m</text><line x1="102.5" y1="652" x2="102.5" y2="765" stroke="#1f2025" stroke-width="1"/><text x="102.3" y="776.6" font-size="8" fill="#c0c1c8" text-anchor="middle" font-weight="normal">01:40:00</text><line x1="151.5" y1="652" x2="151.5" y2="765" stroke="#1f2025" stroke-width="1"/><text x="151.1" y="776.6" font-size="8" fill="#c0c1c8" text-anchor="middle" font-weight="normal">01:41:00</text><line x1="200.5" y1="652" x2="200.5" y2="765" stroke="#1f2025" stroke-width="1"/><text x="200" y="776.6" font-size="8" fill="#c0c1c8" text-anchor="middle" font-weight="normal">01:42:00</text><line x1="249.5" y1="652" x2="249.5" y2="765" stroke="#1f2025" stroke-width="1"/><text x="248.8" y="776.6" font-size="8" fill="#c0c1c8" text-anchor="middle" font-weight="normal">01:43:00</text><line x1="298.5" y1="652" x2="298.5" y2="765" stroke="#1f2025" stroke-width="1"/><text x="297.7" y="776.6" font-size="8" fill="#c0c1c8" text-anchor="middle" font-weight="normal">01:44:00</text><line x1="346.5" y1="652" x2="346.5" y2="765" stroke="#1f2025" stroke-width="1"/><text x="346.5" y="776.6" font-size="8" fill="#c0c1c8" text-anchor="middle" font-weight="normal">01:45:00</text><line x1="395.5" y1="652" x2="395.5" y2="765" stroke="#1f2025" stroke-width="1"/><text x="395.3" y="776.6" font-size="8" fill="#c0c1c8" text-anchor="middle" font-weight="normal">01:46:00</text><line x1="444.5" y1="652" x2="444.5" y2="765" stroke="#1f2025" stroke-width="1"/><text x="444.2" y="776.6" font-size="8" fill="#c0c1c8" text-anchor="middle" font-weight="normal">01:47:00</text><line x1="493.5" y1="652" x2="493.5" y2="765" stroke="#1f2025" stroke-width="1"/><text x="493" y="776.6" font-size="8" fill="#c0c1c8" text-anchor="middle" font-weight="normal">01:48:00</text><line x1="542.5" y1="652" x2="542.5" y2="765" stroke="#1f2025" stroke-width="1"/><text x="541.8" y="776.6" font-size="8" fill="#c0c1c8" text-anchor="middle" font-weight="normal">01:49:00</text><line x1="591.5" y1="652" x2="591.5" y2="765" stroke="#1f2025" stroke-width="1"/><text x="590.7" y="776.6" font-size="8" fill="#c0c1c8" text-anchor="middle" font-weight="normal">01:50:00</text><line x1="640.5" y1="652" x2="640.5" y2="765" stroke="#1f2025" stroke-width="1"/><text x="639.5" y="776.6" font-size="8" fill="#c0c1c8" text-anchor="middle" font-weight="normal">01:51:00</text><line x1="688.5" y1="652" x2="688.5" y2="765" stroke="#1f2025" stroke-width="1"/><text x="688.4" y="776.6" font-size="8" fill="#c0c1c8" text-anchor="middle" font-weight="normal">01:52:00</text><line x1="737.5" y1="652" x2="737.5" y2="765" stroke="#1f2025" stroke-width="1"/><text x="737.2" y="776.6" font-size="8" fill="#c0c1c8" text-anchor="middle" font-weight="normal">01:53:00</text><line x1="786.5" y1="652" x2="786.5" y2="765" stroke="#1f2025" stroke-width="1"/><text x="786" y="776.6" font-size="8" fill="#c0c1c8" text-anchor="middle" font-weight="normal">01:54:00</text><line x1="835.5" y1="652" x2="835.5" y2="765" stroke="#1f2025" stroke-width="1"/><text x="834.9" y="776.6" font-size="8" fill="#c0c1c8" text-anchor="middle" font-weight="normal">01:55:00</text><line x1="884.5" y1="652" x2="884.5" y2="765" stroke="#1f2025" stroke-width="1"/><text x="883.7" y="776.6" font-size="8" fill="#c0c1c8" text-anchor="middle" font-weight="normal">01:56:00</text><line x1="933.5" y1="652" x2="933.5" y2="765" stroke="#1f2025" stroke-width="1"/><text x="932.5" y="776.6" font-size="8" fill="#c0c1c8" text-anchor="middle" font-weight="normal">01:57:00</text><line x1="981.5" y1="652" x2="981.5" y2="765" stroke="#1f2025" stroke-width="1"/><text x="981.4" y="776.6" font-size="8" fill="#c0c1c8" text-anchor="middle" font-weight="normal">01:58:00</text><line x1="1030.5" y1="652" x2="1030.5" y2="765" stroke="#1f2025" stroke-width="1"/><text x="1030.2" y="776.6" font-size="8" fill="#c0c1c8" text-anchor="middle" font-weight="normal">01:59:00</text><line x1="1079.5" y1="652" x2="1079.5" y2="765" stroke="#1f2025" stroke-width="1"/><text x="1079.1" y="776.6" font-size="8" fill="#c0c1c8" text-anchor="middle" font-weight="normal">02:00:00</text><line x1="1128.5" y1="652" x2="1128.5" y2="765" stroke="#1f2025" stroke-width="1"/><text x="1127.9" y="776.6" font-size="8" fill="#c0c1c8" text-anchor="middle" font-weight="normal">02:01:00</text><line x1="1177.5" y1="652" x2="1177.5" y2="765" stroke="#1f2025" stroke-width="1"/><text x="1176.7" y="776.6" font-size="8" fill="#c0c1c8" text-anchor="middle" font-weight="normal">02:02:00</text><line x1="1226.5" y1="652" x2="1226.5" y2="765" stroke="#1f2025" stroke-width="1"/><text x="1225.6" y="776.6" font-size="8" fill="#c0c1c8" text-anchor="middle" font-weight="normal">02:03:00</text><line x1="1274.5" y1="652" x2="1274.5" y2="765" stroke="#1f2025" stroke-width="1"/><text x="1274.4" y="776.6" font-size="8" fill="#c0c1c8" text-anchor="middle" font-weight="normal">02:04:00</text><line x1="1323.5" y1="652" x2="1323.5" y2="765" stroke="#1f2025" stroke-width="1"/><text x="1323.2" y="776.6" font-size="8" fill="#c0c1c8" text-anchor="middle" font-weight="normal">02:05:00</text><line x1="1372.5" y1="652" x2="1372.5" y2="765" stroke="#1f2025" stroke-width="1"/><text x="1372.1" y="776.6" font-size="8" fill="#c0c1c8" text-anchor="middle" font-weight="normal">02:06:00</text><line x1="1421.5" y1="652" x2="1421.5" y2="765" stroke="#1f2025" stroke-width="1"/><text x="1420.9" y="776.6" font-size="8" fill="#c0c1c8" text-anchor="middle" font-weight="normal">02:07:00</text><line x1="1470.5" y1="652" x2="1470.5" y2="765" stroke="#1f2025" stroke-width="1"/><text x="1469.8" y="776.6" font-size="8" fill="#c0c1c8" text-anchor="middle" font-weight="normal">02:08:00</text><line x1="1519.5" y1="652" x2="1519.5" y2="765" stroke="#1f2025" stroke-width="1"/><text x="1518.6" y="776.6" font-size="8" fill="#c0c1c8" text-anchor="middle" font-weight="normal">02:09:00</text><line x1="102.3" y1="765.2" x2="1518.6" y2="765.2" stroke="#a677b4" stroke-width="2"/><circle cx="102.3" cy="765.2" r="2.2" fill="#7f69c2"/><circle cx="151.1" cy="765.2" r="2.2" fill="#7f69c2"/><circle cx="200" cy="765.2" r="2.2" fill="#7f69c2"/><circle cx="248.8" cy="765.2" r="2.2" fill="#7f69c2"/><circle cx="297.7" cy="765.2" r="2.2" fill="#7f69c2"/><circle cx="346.5" cy="765.2" r="2.2" fill="#7f69c2"/><circle cx="395.3" cy="765.2" r="2.2" fill="#7f69c2"/><circle cx="444.2" cy="765.2" r="2.2" fill="#7f69c2"/><circle cx="493" cy="765.2" r="2.2" fill="#7f69c2"/><circle cx="541.8" cy="765.2" r="2.2" fill="#7f69c2"/><circle cx="590.7" cy="765.2" r="2.2" fill="#7f69c2"/><circle cx="639.5" cy="765.2" r="2.2" fill="#7f69c2"/><circle cx="688.4" cy="765.2" r="2.2" fill="#7f69c2"/><circle cx="737.2" cy="765.2" r="2.2" fill="#7f69c2"/><circle cx="786" cy="765.2" r="2.2" fill="#7f69c2"/><circle cx="834.9" cy="765.2" r="2.2" fill="#7f69c2"/><circle cx="883.7" cy="765.2" r="2.2" fill="#7f69c2"/><circle cx="932.5" cy="765.2" r="2.2" fill="#7f69c2"/><circle cx="981.4" cy="765.2" r="2.2" fill="#7f69c2"/><circle cx="1030.2" cy="765.2" r="2.2" fill="#7f69c2"/><circle cx="1079.1" cy="765.2" r="2.2" fill="#7f69c2"/><circle cx="1127.9" cy="765.2" r="2.2" fill="#7f69c2"/><circle cx="1176.7" cy="765.2" r="2.2" fill="#7f69c2"/><circle cx="1225.6" cy="765.2" r="2.2" fill="#7f69c2"/><circle cx="1274.4" cy="765.2" r="2.2" fill="#7f69c2"/><circle cx="1323.2" cy="765.2" r="2.2" fill="#7f69c2"/><circle cx="1372.1" cy="765.2" r="2.2" fill="#7f69c2"/><circle cx="1420.9" cy="765.2" r="2.2" fill="#7f69c2"/><circle cx="1469.8" cy="765.2" r="2.2" fill="#7f69c2"/><circle cx="1518.6" cy="765.2" r="2.2" fill="#7f69c2"/><line x1="28" y1="829.5" x2="878" y2="829.5" stroke="#1f2025" stroke-width="1"/><text x="25" y="831.4" font-size="8" fill="#c0c1c8" text-anchor="end" font-weight="normal">100</text><line x1="28" y1="865.5" x2="878" y2="865.5" stroke="#1f2025" stroke-width="1"/><text x="25" y="867.4" font-size="8" fill="#c0c1c8" text-anchor="end" font-weight="normal">50</text><line x1="28" y1="902.5" x2="878" y2="902.5" stroke="#1f2025" stroke-width="1"/><text x="25" y="904.2" font-size="8" fill="#c0c1c8" text-anchor="end" font-weight="normal">0</text><line x1="55.5" y1="829" x2="55.5" y2="902" stroke="#1f2025" stroke-width="1"/><text x="55.4" y="914" font-size="8" fill="#c0c1c8" text-anchor="middle" font-weight="normal">01:40</text><line x1="197.5" y1="829" x2="197.5" y2="902" stroke="#1f2025" stroke-width="1"/><text x="196.6" y="914" font-size="8" fill="#c0c1c8" text-anchor="middle" font-weight="normal">01:45</text><line x1="338.5" y1="829" x2="338.5" y2="902" stroke="#1f2025" stroke-width="1"/><text x="337.8" y="914" font-size="8" fill="#c0c1c8" text-anchor="middle" font-weight="normal">01:50</text><line x1="479.5" y1="829" x2="479.5" y2="902" stroke="#1f2025" stroke-width="1"/><text x="479" y="914" font-size="8" fill="#c0c1c8" text-anchor="middle" font-weight="normal">01:55</text><line x1="620.5" y1="829" x2="620.5" y2="902" stroke="#1f2025" stroke-width="1"/><text x="620.2" y="914" font-size="8" fill="#c0c1c8" text-anchor="middle" font-weight="normal">02:00</text><line x1="761.5" y1="829" x2="761.5" y2="902" stroke="#1f2025" stroke-width="1"/><text x="761.4" y="914" font-size="8" fill="#c0c1c8" text-anchor="middle" font-weight="normal">02:05</text><line x1="53" y1="902.5" x2="874.4" y2="902.5" stroke="#4f8a4a" stroke-width="1"/><circle cx="55.4" cy="902.5" r="1.7" fill="#73bf69"/><circle cx="83.6" cy="902.5" r="1.7" fill="#73bf69"/><circle cx="111.9" cy="902.5" r="1.7" fill="#73bf69"/><circle cx="140.1" cy="902.5" r="1.7" fill="#73bf69"/><circle cx="168.4" cy="902.5" r="1.7" fill="#73bf69"/><circle cx="196.6" cy="902.5" r="1.7" fill="#73bf69"/><circle cx="224.8" cy="902.5" r="1.7" fill="#73bf69"/><circle cx="253.1" cy="902.5" r="1.7" fill="#73bf69"/><circle cx="281.3" cy="902.5" r="1.7" fill="#73bf69"/><circle cx="309.6" cy="902.5" r="1.7" fill="#73bf69"/><circle cx="337.8" cy="902.5" r="1.7" fill="#73bf69"/><circle cx="366" cy="902.5" r="1.7" fill="#73bf69"/><circle cx="394.3" cy="902.5" r="1.7" fill="#73bf69"/><circle cx="422.5" cy="902.5" r="1.7" fill="#73bf69"/><circle cx="450.8" cy="902.5" r="1.7" fill="#73bf69"/><circle cx="479" cy="902.5" r="1.7" fill="#73bf69"/><circle cx="507.2" cy="902.5" r="1.7" fill="#73bf69"/><circle cx="535.5" cy="902.5" r="1.7" fill="#73bf69"/><circle cx="563.7" cy="902.5" r="1.7" fill="#73bf69"/><circle cx="592" cy="902.5" r="1.7" fill="#73bf69"/><circle cx="620.2" cy="902.5" r="1.7" fill="#73bf69"/><circle cx="648.4" cy="902.5" r="1.7" fill="#73bf69"/><circle cx="676.7" cy="902.5" r="1.7" fill="#73bf69"/><circle cx="704.9" cy="902.5" r="1.7" fill="#73bf69"/><circle cx="733.2" cy="902.5" r="1.7" fill="#73bf69"/><circle cx="761.4" cy="902.5" r="1.7" fill="#73bf69"/><circle cx="789.6" cy="902.5" r="1.7" fill="#73bf69"/><circle cx="817.9" cy="902.5" r="1.7" fill="#73bf69"/><circle cx="846.1" cy="902.5" r="1.7" fill="#73bf69"/><circle cx="874.4" cy="902.5" r="1.7" fill="#73bf69"/><rect x="22" y="924" width="10" height="2" fill="#73bf69"/><text x="37" y="927.6" font-size="8.2" fill="#c0c1c8" text-anchor="start" font-weight="normal">rooms_numbers.mean</text><line x1="929.4" y1="829.5" x2="1779" y2="829.5" stroke="#1f2025" stroke-width="1"/><text x="926" y="831.4" font-size="8" fill="#c0c1c8" text-anchor="end" font-weight="normal">100</text><line x1="929.4" y1="865.5" x2="1779" y2="865.5" stroke="#1f2025" stroke-width="1"/><text x="926" y="867.4" font-size="8" fill="#c0c1c8" text-anchor="end" font-weight="normal">50</text><line x1="929.4" y1="902.5" x2="1779" y2="902.5" stroke="#1f2025" stroke-width="1"/><text x="926" y="904.2" font-size="8" fill="#c0c1c8" text-anchor="end" font-weight="normal">0</text><line x1="956.5" y1="829" x2="956.5" y2="902" stroke="#1f2025" stroke-width="1"/><text x="956.4" y="914" font-size="8" fill="#c0c1c8" text-anchor="middle" font-weight="normal">01:40</text><line x1="1098.5" y1="829" x2="1098.5" y2="902" stroke="#1f2025" stroke-width="1"/><text x="1097.7" y="914" font-size="8" fill="#c0c1c8" text-anchor="middle" font-weight="normal">01:45</text><line x1="1239.5" y1="829" x2="1239.5" y2="902" stroke="#1f2025" stroke-width="1"/><text x="1238.9" y="914" font-size="8" fill="#c0c1c8" text-anchor="middle" font-weight="normal">01:50</text><line x1="1380.5" y1="829" x2="1380.5" y2="902" stroke="#1f2025" stroke-width="1"/><text x="1380.2" y="914" font-size="8" fill="#c0c1c8" text-anchor="middle" font-weight="normal">01:55</text><line x1="1521.5" y1="829" x2="1521.5" y2="902" stroke="#1f2025" stroke-width="1"/><text x="1521.4" y="914" font-size="8" fill="#c0c1c8" text-anchor="middle" font-weight="normal">02:00</text><line x1="1663.5" y1="829" x2="1663.5" y2="902" stroke="#1f2025" stroke-width="1"/><text x="1662.7" y="914" font-size="8" fill="#c0c1c8" text-anchor="middle" font-weight="normal">02:05</text><line x1="954.4" y1="902.5" x2="1775.7" y2="902.5" stroke="#4f8a4a" stroke-width="1"/><circle cx="956.4" cy="902.5" r="1.7" fill="#73bf69"/><circle cx="984.6" cy="902.5" r="1.7" fill="#73bf69"/><circle cx="1012.9" cy="902.5" r="1.7" fill="#73bf69"/><circle cx="1041.2" cy="902.5" r="1.7" fill="#73bf69"/><circle cx="1069.4" cy="902.5" r="1.7" fill="#73bf69"/><circle cx="1097.7" cy="902.5" r="1.7" fill="#73bf69"/><circle cx="1125.9" cy="902.5" r="1.7" fill="#73bf69"/><circle cx="1154.2" cy="902.5" r="1.7" fill="#73bf69"/><circle cx="1182.4" cy="902.5" r="1.7" fill="#73bf69"/><circle cx="1210.7" cy="902.5" r="1.7" fill="#73bf69"/><circle cx="1238.9" cy="902.5" r="1.7" fill="#73bf69"/><circle cx="1267.2" cy="902.5" r="1.7" fill="#73bf69"/><circle cx="1295.4" cy="902.5" r="1.7" fill="#73bf69"/><circle cx="1323.7" cy="902.5" r="1.7" fill="#73bf69"/><circle cx="1351.9" cy="902.5" r="1.7" fill="#73bf69"/><circle cx="1380.2" cy="902.5" r="1.7" fill="#73bf69"/><circle cx="1408.4" cy="902.5" r="1.7" fill="#73bf69"/><circle cx="1436.7" cy="902.5" r="1.7" fill="#73bf69"/><circle cx="1464.9" cy="902.5" r="1.7" fill="#73bf69"/><circle cx="1493.2" cy="902.5" r="1.7" fill="#73bf69"/><circle cx="1521.4" cy="902.5" r="1.7" fill="#73bf69"/><circle cx="1549.7" cy="902.5" r="1.7" fill="#73bf69"/><circle cx="1577.9" cy="902.5" r="1.7" fill="#73bf69"/><circle cx="1606.2" cy="902.5" r="1.7" fill="#73bf69"/><circle cx="1634.4" cy="902.5" r="1.7" fill="#73bf69"/><circle cx="1662.7" cy="902.5" r="1.7" fill="#73bf69"/><circle cx="1690.9" cy="902.5" r="1.7" fill="#73bf69"/><circle cx="1719.2" cy="902.5" r="1.7" fill="#73bf69"/><circle cx="1747.4" cy="902.5" r="1.7" fill="#73bf69"/><circle cx="1775.7" cy="902.5" r="1.7" fill="#73bf69"/><rect x="922" y="924" width="10" height="2" fill="#73bf69"/><text x="937" y="927.6" font-size="8.2" fill="#c0c1c8" text-anchor="start" font-weight="normal">users_connected.mean</text><text x="865.5" y="323.1" font-size="8.6" fill="#d8d9da" text-anchor="start" font-weight="bold" textLength="73.6" lengthAdjust="spacingAndGlyphs">Events by country</text><text x="849.3" y="626.9" font-size="8.6" fill="#d8d9da" text-anchor="start" font-weight="bold" textLength="105.7" lengthAdjust="spacingAndGlyphs">Socket io received events</text><text x="423.8" y="804.9" font-size="8.6" fill="#d8d9da" text-anchor="start" font-weight="bold" textLength="57.3" lengthAdjust="spacingAndGlyphs">Active Rooms</text><text x="1318.5" y="804.9" font-size="8.6" fill="#d8d9da" text-anchor="start" font-weight="bold" textLength="68.8" lengthAdjust="spacingAndGlyphs">connected users</text><text x="1675.7" y="344.6" font-size="8" fill="#5794f2" text-anchor="start" font-weight="bold">Last *</text><path d="M1699.8 342.2L1701.9 344.1 1704 342.2" fill="none" stroke="#5794f2" stroke-width="0.9"/><text x="1717.2" y="344.6" font-size="8" fill="#5794f2" text-anchor="start" font-weight="bold">Mean</text><text x="1758.6" y="344.6" font-size="8" fill="#5794f2" text-anchor="start" font-weight="bold">Max</text><line x1="1636" y1="351.5" x2="1794" y2="351.5" stroke="#202226" stroke-width="1"/><line x1="1636" y1="366.5" x2="1794" y2="366.5" stroke="#202226" stroke-width="1"/><rect x="1641" y="358" width="9" height="2" fill="#73bf69"/><text x="1655.8" y="361.3" font-size="8.2" fill="#c0c1c8" text-anchor="start" font-weight="normal">FR</text><text x="1675.7" y="361.2" font-size="8.5" fill="#c0c1c8" text-anchor="start" font-weight="normal">0 ops/m</text><text x="1717.2" y="361.2" font-size="8.5" fill="#c0c1c8" text-anchor="start" font-weight="normal">0 ops/m</text><text x="1758.6" y="361.2" font-size="8.5" fill="#c0c1c8" text-anchor="start" font-weight="normal">0 ops/m</text><path d="M1740.8 645.8L1742.9 647.7 1745 645.8" fill="none" stroke="#5794f2" stroke-width="0.9"/><text x="1634.6" y="648.7" font-size="8" fill="#5794f2" text-anchor="start" font-weight="bold">Min</text><text x="1675.7" y="648.7" font-size="8" fill="#5794f2" text-anchor="start" font-weight="bold">Max</text><text x="1717.3" y="648.7" font-size="8" fill="#5794f2" text-anchor="start" font-weight="bold">Last *</text><text x="1758.6" y="648.7" font-size="8" fill="#5794f2" text-anchor="start" font-weight="bold">Mean</text><line x1="1538" y1="655.5" x2="1794" y2="655.5" stroke="#202226" stroke-width="1"/><line x1="1538" y1="671.5" x2="1794" y2="671.5" stroke="#202226" stroke-width="1"/><line x1="1538" y1="686.5" x2="1794" y2="686.5" stroke="#202226" stroke-width="1"/><line x1="1538" y1="702.5" x2="1794" y2="702.5" stroke="#202226" stroke-width="1"/><line x1="1538" y1="717.5" x2="1794" y2="717.5" stroke="#202226" stroke-width="1"/><line x1="1538" y1="733.5" x2="1794" y2="733.5" stroke="#202226" stroke-width="1"/><line x1="1538" y1="749.5" x2="1794" y2="749.5" stroke="#202226" stroke-width="1"/><line x1="1538" y1="764.5" x2="1794" y2="764.5" stroke="#202226" stroke-width="1"/><rect x="1543" y="661" width="9" height="3" fill="#73bf69"/><text x="1557.5" y="665.1" font-size="8.2" fill="#c0c1c8" text-anchor="start" font-weight="normal">changeInstrument</text><text x="1634.6" y="664.9" font-size="8.5" fill="#c0c1c8" text-anchor="start" font-weight="normal">0 ops/m</text><text x="1675.7" y="664.9" font-size="8.5" fill="#c0c1c8" text-anchor="start" font-weight="normal">0 ops/m</text><text x="1717.3" y="664.9" font-size="8.5" fill="#c0c1c8" text-anchor="start" font-weight="normal">0 ops/m</text><text x="1758.6" y="664.9" font-size="8.5" fill="#c0c1c8" text-anchor="start" font-weight="normal">0 ops/m</text><rect x="1543" y="677" width="9" height="3" fill="#fade2a"/><text x="1557.5" y="681.1" font-size="8.2" fill="#c0c1c8" text-anchor="start" font-weight="normal">changeUsername</text><text x="1634.6" y="680.9" font-size="8.5" fill="#c0c1c8" text-anchor="start" font-weight="normal">0 ops/m</text><text x="1675.7" y="680.9" font-size="8.5" fill="#c0c1c8" text-anchor="start" font-weight="normal">0 ops/m</text><text x="1717.3" y="680.9" font-size="8.5" fill="#c0c1c8" text-anchor="start" font-weight="normal">0 ops/m</text><text x="1758.6" y="680.9" font-size="8.5" fill="#c0c1c8" text-anchor="start" font-weight="normal">0 ops/m</text><rect x="1543" y="692.2" width="9" height="3" fill="#8ab8ff"/><text x="1557.5" y="696.3" font-size="8.2" fill="#c0c1c8" text-anchor="start" font-weight="normal">chatMessage</text><text x="1634.6" y="696.1" font-size="8.5" fill="#c0c1c8" text-anchor="start" font-weight="normal">0 ops/m</text><text x="1675.7" y="696.1" font-size="8.5" fill="#c0c1c8" text-anchor="start" font-weight="normal">0 ops/m</text><text x="1717.3" y="696.1" font-size="8.5" fill="#c0c1c8" text-anchor="start" font-weight="normal">0 ops/m</text><text x="1758.6" y="696.1" font-size="8.5" fill="#c0c1c8" text-anchor="start" font-weight="normal">0 ops/m</text><rect x="1543" y="708" width="9" height="3" fill="#ff780a"/><text x="1557.5" y="712.1" font-size="8.2" fill="#c0c1c8" text-anchor="start" font-weight="normal">createRoom</text><text x="1634.6" y="711.9" font-size="8.5" fill="#c0c1c8" text-anchor="start" font-weight="normal">0 ops/m</text><text x="1675.7" y="711.9" font-size="8.5" fill="#c0c1c8" text-anchor="start" font-weight="normal">0 ops/m</text><text x="1717.3" y="711.9" font-size="8.5" fill="#c0c1c8" text-anchor="start" font-weight="normal">0 ops/m</text><text x="1758.6" y="711.9" font-size="8.5" fill="#c0c1c8" text-anchor="start" font-weight="normal">0 ops/m</text><rect x="1543" y="724" width="9" height="3" fill="#f2495c"/><text x="1557.5" y="728.1" font-size="8.2" fill="#c0c1c8" text-anchor="start" font-weight="normal">joinRoom</text><text x="1634.6" y="727.9" font-size="8.5" fill="#c0c1c8" text-anchor="start" font-weight="normal">0 ops/m</text><text x="1675.7" y="727.9" font-size="8.5" fill="#c0c1c8" text-anchor="start" font-weight="normal">0 ops/m</text><text x="1717.3" y="727.9" font-size="8.5" fill="#c0c1c8" text-anchor="start" font-weight="normal">0 ops/m</text><text x="1758.6" y="727.9" font-size="8.5" fill="#c0c1c8" text-anchor="start" font-weight="normal">0 ops/m</text><rect x="1543" y="739.3" width="9" height="3" fill="#5794f2"/><text x="1557.5" y="743.4" font-size="8.2" fill="#c0c1c8" text-anchor="start" font-weight="normal">latency</text><text x="1634.6" y="743.2" font-size="8.5" fill="#c0c1c8" text-anchor="start" font-weight="normal">0 ops/m</text><text x="1675.7" y="743.2" font-size="8.5" fill="#c0c1c8" text-anchor="start" font-weight="normal">0 ops/m</text><text x="1717.3" y="743.2" font-size="8.5" fill="#c0c1c8" text-anchor="start" font-weight="normal">0 ops/m</text><text x="1758.6" y="743.2" font-size="8.5" fill="#c0c1c8" text-anchor="start" font-weight="normal">0 ops/m</text><rect x="1543" y="755.3" width="9" height="3" fill="#ca95e5"/><text x="1557.5" y="759.4" font-size="8.2" fill="#c0c1c8" text-anchor="start" font-weight="normal">leaveRoom</text><text x="1634.6" y="759.2" font-size="8.5" fill="#c0c1c8" text-anchor="start" font-weight="normal">0 ops/m</text><text x="1675.7" y="759.2" font-size="8.5" fill="#c0c1c8" text-anchor="start" font-weight="normal">0 ops/m</text><text x="1717.3" y="759.2" font-size="8.5" fill="#c0c1c8" text-anchor="start" font-weight="normal">0 ops/m</text><text x="1758.6" y="759.2" font-size="8.5" fill="#c0c1c8" text-anchor="start" font-weight="normal">0 ops/m</text><rect x="1543" y="771" width="9" height="3" fill="#705da0"/><text x="1557.5" y="775.1" font-size="8.2" fill="#c0c1c8" text-anchor="start" font-weight="normal">pianoBatch</text><text x="1634.6" y="774.9" font-size="8.5" fill="#c0c1c8" text-anchor="start" font-weight="normal">0 ops/m</text><text x="1675.7" y="774.9" font-size="8.5" fill="#c0c1c8" text-anchor="start" font-weight="normal">0 ops/m</text><text x="1717.3" y="774.9" font-size="8.5" fill="#c0c1c8" text-anchor="start" font-weight="normal">0 ops/m</text><text x="1758.6" y="774.9" font-size="8.5" fill="#c0c1c8" text-anchor="start" font-weight="normal">0 ops/m</text></svg>
</body></html>
